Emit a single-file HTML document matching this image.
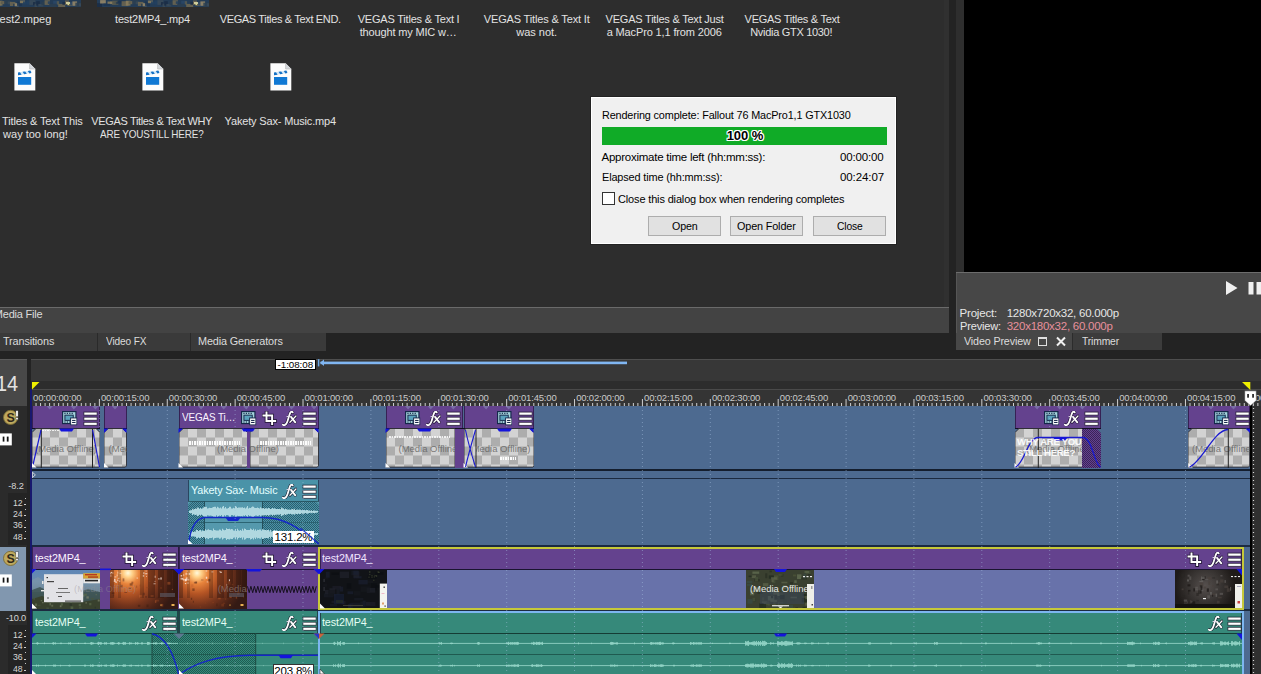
<!DOCTYPE html><html><head><meta charset="utf-8"><title>VEGAS</title><style>
html,body{margin:0;padding:0;background:#232323;}
body{width:1261px;height:674px;overflow:hidden;position:relative;font-family:"Liberation Sans",sans-serif;}
.abs{position:absolute;}
.ml{font-size:11.5px;color:#e2e2e2;white-space:nowrap;line-height:14px;letter-spacing:-0.25px;}
.tl{font-size:11.5px;color:#dcdcdc;white-space:nowrap;line-height:15px;letter-spacing:-0.2px;}
.pl{font-size:11.5px;color:#e6e6e6;white-space:nowrap;line-height:14px;letter-spacing:-0.1px;}
.dl{font-size:11.5px;color:#000;white-space:nowrap;line-height:14px;letter-spacing:-0.22px;}
.btn{width:73px;height:20px;box-sizing:border-box;background:#e1e1e1;border:1px solid #adadad;text-align:center;line-height:18px;}
.strip{background:linear-gradient(90deg,#2a3648,#4a4a3c 20%,#26344a 45%,#50483a 70%,#2a3850);}
.ct{font-size:12px;white-space:nowrap;line-height:15px;letter-spacing:-0.1px;}
.chk{background-color:#d8d8d8;background-image:repeating-conic-gradient(#b3b3b3 0% 25%,#d8d8d8 0% 50%);background-size:17.8px 17.8px;}
.off{font-size:12.5px;text-align:center;white-space:nowrap;line-height:16px;letter-spacing:0.2px;}
.rl{font-size:10px;color:#c4c4c4;white-space:nowrap;line-height:12px;letter-spacing:-0.3px;text-shadow:1px 1px 0 #1a1a1a;}
.ll{font-size:10.5px;color:#d8d8d8;white-space:nowrap;line-height:12px;text-align:right;letter-spacing:-0.2px;}
.wt{height:4px;background:repeating-linear-gradient(90deg,#fff 0 2px,rgba(255,255,255,0.25) 2px 3px,#fff 3px 4px,rgba(255,255,255,0) 4px 5px);opacity:0.95}</style></head><body>
<svg width="0" height="0" style="position:absolute"><defs>
<symbol id="ham" viewBox="0 0 15 15"><g fill="#fff" stroke="#0c0618" stroke-opacity="0.78" stroke-width="0.8"><rect x="0.9" y="1.1" width="13.2" height="3"/><rect x="0.9" y="6.2" width="13.2" height="3"/><rect x="0.9" y="11.3" width="13.2" height="3"/></g></symbol>
<symbol id="fx" viewBox="0 0 15 15"><g fill="none" stroke="#0c0618" stroke-opacity="0.78" stroke-linecap="round" stroke-linejoin="round"><path d="M10.7 1.4C10.2 0.5 8.9 0.5 8.3 1.7C7.4 3.5 6.6 7 5.6 10C4.9 12.2 4 13.8 2.6 14.1C1.8 14.3 1.1 14 0.9 13.6" stroke-width="3"/><path d="M9 5.9L13.3 11.3M14 5L7.9 11.3" stroke-width="2.8"/></g><g fill="none" stroke="#fff" stroke-linecap="round" stroke-linejoin="round"><path d="M10.7 1.4C10.2 0.5 8.9 0.5 8.3 1.7C7.4 3.5 6.6 7 5.6 10C4.9 12.2 4 13.8 2.6 14.1C1.8 14.3 1.1 14 0.9 13.6" stroke-width="1.8"/><path d="M5 5.5H8.2" stroke-width="0.9" stroke="#e8e0f0"/><path d="M9 5.9L13.3 11.3" stroke-width="1.85"/><path d="M14 5L7.9 11.3" stroke-width="1.25"/></g></symbol>
<symbol id="crop" viewBox="0 0 16 16"><g fill="none" stroke="#0c0618" stroke-opacity="0.78" stroke-width="3.8" stroke-linecap="square"><path d="M4.8 1.6 V10.6 H14"/><path d="M1.6 4.8 H10.8 V14"/></g><g fill="none" stroke="#fff" stroke-width="2.1" stroke-linecap="square"><path d="M4.8 1.6 V10.6 H14"/><path d="M1.6 4.8 H10.8 V14"/></g></symbol>
<symbol id="gen" viewBox="0 0 16 15"><rect x="0.6" y="0.6" width="13.8" height="12.4" fill="#a4d4dc" stroke="#16284a" stroke-width="1.2"/><rect x="3" y="4.3" width="8.6" height="5.4" fill="#5aa2bc" stroke="#16284a" stroke-width="1"/><g fill="#16284a"><rect x="2.4" y="1.8" width="1.3" height="1.2"/><rect x="4.9" y="1.8" width="1.3" height="1.2"/><rect x="7.4" y="1.8" width="1.3" height="1.2"/><rect x="9.9" y="1.8" width="1.3" height="1.2"/><rect x="2.4" y="10.8" width="1.3" height="1.2"/><rect x="4.9" y="10.8" width="1.3" height="1.2"/><rect x="7.4" y="10.8" width="1.3" height="1.2"/></g><rect x="8.9" y="7.2" width="6.5" height="7.2" fill="#fff" stroke="#16284a" stroke-width="1"/><rect x="10.4" y="9.2" width="3.6" height="1.1" fill="#16284a"/><rect x="10.4" y="11.3" width="3.6" height="1.1" fill="#16284a"/></symbol>
<pattern id="dith" width="2" height="2" patternUnits="userSpaceOnUse"><rect width="2" height="2" fill="#2c5f6e"/><rect width="1" height="1" fill="#4a93a8"/><rect x="1" y="1" width="1" height="1" fill="#4a93a8"/></pattern>
<pattern id="dithg" width="2" height="2" patternUnits="userSpaceOnUse"><rect width="2" height="2" fill="#1f5c52"/><rect width="1" height="1" fill="#36897a"/><rect x="1" y="1" width="1" height="1" fill="#36897a"/></pattern>
<pattern id="dithp" width="2" height="2" patternUnits="userSpaceOnUse"><rect width="2" height="2" fill="#3a2458"/><rect width="1" height="1" fill="#64428e"/><rect x="1" y="1" width="1" height="1" fill="#64428e"/></pattern>
</defs></svg>
<div class="abs" style="left:0;top:0;width:949px;height:307px;background:#2d2d2d"></div>
<svg class="abs" style="left:0px;top:0" width="81" height="7.2"><rect width="81" height="7.2" fill="#243c56"/><rect x="-31.0" y="3.2" width="5.1" height="4.8" fill="#1a2c44" opacity="0.85"/><rect x="-27.9" y="0.1" width="5.7" height="3.4" fill="#9a8a68" opacity="0.85"/><rect x="-24.5" y="3.6" width="6.7" height="2.3" fill="#1c3450" opacity="0.85"/><rect x="-20.5" y="1.5" width="4.3" height="2.3" fill="#8a7c5c" opacity="0.85"/><rect x="-17.9" y="1.6" width="3.2" height="2.5" fill="#8a7c5c" opacity="0.85"/><rect x="-15.9" y="0.6" width="6.3" height="4.4" fill="#5a5a4c" opacity="0.85"/><rect x="-12.1" y="1.8" width="2.7" height="2.4" fill="#2c3e50" opacity="0.85"/><rect x="-10.5" y="0.8" width="6.9" height="2.6" fill="#1c3450" opacity="0.85"/><rect x="-6.4" y="1.2" width="6.9" height="4.9" fill="#6e6650" opacity="0.85"/><rect x="-2.2" y="0.7" width="4.7" height="4.9" fill="#8a7c5c" opacity="0.85"/><rect x="0.6" y="1.2" width="3.0" height="3.1" fill="#5a5a4c" opacity="0.85"/><rect x="2.4" y="1.1" width="2.8" height="3.0" fill="#6e6650" opacity="0.85"/><rect x="4.1" y="0.0" width="6.1" height="4.0" fill="#2c3e50" opacity="0.85"/><rect x="7.7" y="1.4" width="3.7" height="2.9" fill="#3a4a58" opacity="0.85"/><rect x="9.9" y="1.9" width="5.5" height="4.1" fill="#6e6650" opacity="0.85"/><rect x="13.2" y="3.8" width="2.3" height="3.1" fill="#1c3450" opacity="0.85"/><rect x="14.6" y="3.2" width="4.0" height="3.1" fill="#9a8a68" opacity="0.85"/><rect x="17.0" y="1.8" width="4.9" height="4.1" fill="#1c3450" opacity="0.85"/><rect x="19.9" y="0.5" width="5.1" height="2.7" fill="#8a7c5c" opacity="0.85"/><rect x="23.0" y="1.4" width="6.1" height="3.1" fill="#22405e" opacity="0.85"/><rect x="26.7" y="0.4" width="4.6" height="4.2" fill="#22405e" opacity="0.85"/><rect x="29.4" y="0.1" width="6.0" height="4.8" fill="#3a4a58" opacity="0.85"/><rect x="33.0" y="2.1" width="2.5" height="3.1" fill="#1a2c44" opacity="0.85"/><rect x="34.5" y="3.7" width="2.7" height="3.6" fill="#3a4a58" opacity="0.85"/><rect x="36.2" y="1.2" width="3.6" height="4.4" fill="#1a2c44" opacity="0.85"/><rect x="38.3" y="4.0" width="5.1" height="2.5" fill="#3a4a58" opacity="0.85"/><rect x="41.4" y="2.1" width="2.2" height="3.2" fill="#2c3e50" opacity="0.85"/><rect x="42.7" y="1.4" width="3.2" height="2.8" fill="#2c3e50" opacity="0.85"/><rect x="44.6" y="0.2" width="5.3" height="4.7" fill="#6e6650" opacity="0.85"/><rect x="47.8" y="1.3" width="2.2" height="2.6" fill="#22405e" opacity="0.85"/><rect x="49.1" y="3.8" width="6.9" height="3.9" fill="#2c3e50" opacity="0.85"/><rect x="53.2" y="0.7" width="5.9" height="3.1" fill="#2a4666" opacity="0.85"/><rect x="56.8" y="1.2" width="2.3" height="3.4" fill="#5a5a4c" opacity="0.85"/><rect x="58.2" y="3.9" width="7.0" height="3.4" fill="#6e6650" opacity="0.85"/><rect x="62.4" y="1.9" width="4.4" height="2.9" fill="#1a2c44" opacity="0.85"/><rect x="65.0" y="0.5" width="4.0" height="4.5" fill="#6e6650" opacity="0.85"/><rect x="67.4" y="2.5" width="4.7" height="3.5" fill="#6e6650" opacity="0.85"/><rect x="70.2" y="2.0" width="3.7" height="3.5" fill="#2a4666" opacity="0.85"/><rect x="72.4" y="1.4" width="4.7" height="4.4" fill="#9a8a68" opacity="0.85"/><rect x="75.3" y="2.7" width="5.9" height="4.3" fill="#2c3e50" opacity="0.85"/><rect x="78.8" y="3.3" width="3.8" height="2.8" fill="#3a4a58" opacity="0.85"/><rect x="66" y="2.2" width="4" height="1.6" fill="#e8e4b0"/><rect x="67.5" y="3.5" width="1.5" height="1.5" fill="#d0d890"/></svg>
<svg class="abs" style="left:97px;top:0" width="112" height="7.2"><rect width="112" height="7.2" fill="#243c56"/><rect x="0.0" y="3.2" width="5.1" height="4.8" fill="#1a2c44" opacity="0.85"/><rect x="3.1" y="0.1" width="5.7" height="3.4" fill="#9a8a68" opacity="0.85"/><rect x="6.5" y="3.6" width="6.7" height="2.3" fill="#1c3450" opacity="0.85"/><rect x="10.5" y="1.5" width="4.3" height="2.3" fill="#8a7c5c" opacity="0.85"/><rect x="13.1" y="1.6" width="3.2" height="2.5" fill="#8a7c5c" opacity="0.85"/><rect x="15.1" y="0.6" width="6.3" height="4.4" fill="#5a5a4c" opacity="0.85"/><rect x="18.9" y="1.8" width="2.7" height="2.4" fill="#2c3e50" opacity="0.85"/><rect x="20.5" y="0.8" width="6.9" height="2.6" fill="#1c3450" opacity="0.85"/><rect x="24.6" y="1.2" width="6.9" height="4.9" fill="#6e6650" opacity="0.85"/><rect x="28.8" y="0.7" width="4.7" height="4.9" fill="#8a7c5c" opacity="0.85"/><rect x="31.6" y="1.2" width="3.0" height="3.1" fill="#5a5a4c" opacity="0.85"/><rect x="33.4" y="1.1" width="2.8" height="3.0" fill="#6e6650" opacity="0.85"/><rect x="35.1" y="0.0" width="6.1" height="4.0" fill="#2c3e50" opacity="0.85"/><rect x="38.7" y="1.4" width="3.7" height="2.9" fill="#3a4a58" opacity="0.85"/><rect x="40.9" y="1.9" width="5.5" height="4.1" fill="#6e6650" opacity="0.85"/><rect x="44.2" y="3.8" width="2.3" height="3.1" fill="#1c3450" opacity="0.85"/><rect x="45.6" y="3.2" width="4.0" height="3.1" fill="#9a8a68" opacity="0.85"/><rect x="48.0" y="1.8" width="4.9" height="4.1" fill="#1c3450" opacity="0.85"/><rect x="50.9" y="0.5" width="5.1" height="2.7" fill="#8a7c5c" opacity="0.85"/><rect x="54.0" y="1.4" width="6.1" height="3.1" fill="#22405e" opacity="0.85"/><rect x="57.7" y="0.4" width="4.6" height="4.2" fill="#22405e" opacity="0.85"/><rect x="60.4" y="0.1" width="6.0" height="4.8" fill="#3a4a58" opacity="0.85"/><rect x="64.0" y="2.1" width="2.5" height="3.1" fill="#1a2c44" opacity="0.85"/><rect x="65.5" y="3.7" width="2.7" height="3.6" fill="#3a4a58" opacity="0.85"/><rect x="67.2" y="1.2" width="3.6" height="4.4" fill="#1a2c44" opacity="0.85"/><rect x="69.3" y="4.0" width="5.1" height="2.5" fill="#3a4a58" opacity="0.85"/><rect x="72.4" y="2.1" width="2.2" height="3.2" fill="#2c3e50" opacity="0.85"/><rect x="73.7" y="1.4" width="3.2" height="2.8" fill="#2c3e50" opacity="0.85"/><rect x="75.6" y="0.2" width="5.3" height="4.7" fill="#6e6650" opacity="0.85"/><rect x="78.8" y="1.3" width="2.2" height="2.6" fill="#22405e" opacity="0.85"/><rect x="80.1" y="3.8" width="6.9" height="3.9" fill="#2c3e50" opacity="0.85"/><rect x="84.2" y="0.7" width="5.9" height="3.1" fill="#2a4666" opacity="0.85"/><rect x="87.8" y="1.2" width="2.3" height="3.4" fill="#5a5a4c" opacity="0.85"/><rect x="89.2" y="3.9" width="7.0" height="3.4" fill="#6e6650" opacity="0.85"/><rect x="93.4" y="1.9" width="4.4" height="2.9" fill="#1a2c44" opacity="0.85"/><rect x="96.0" y="0.5" width="4.0" height="4.5" fill="#6e6650" opacity="0.85"/><rect x="98.4" y="2.5" width="4.7" height="3.5" fill="#6e6650" opacity="0.85"/><rect x="101.2" y="2.0" width="3.7" height="3.5" fill="#2a4666" opacity="0.85"/><rect x="103.4" y="1.4" width="4.7" height="4.4" fill="#9a8a68" opacity="0.85"/><rect x="106.3" y="2.7" width="5.9" height="4.3" fill="#2c3e50" opacity="0.85"/><rect x="109.8" y="3.3" width="3.8" height="2.8" fill="#3a4a58" opacity="0.85"/><rect x="97" y="2.2" width="4" height="1.6" fill="#e8e4b0"/><rect x="98.5" y="3.5" width="1.5" height="1.5" fill="#d0d890"/></svg>
<div class="abs" style="left:-3.60px;top:12px;font-size:11px;line-height:14px;letter-spacing:0.058px;color:#e2e2e2;white-space:pre;">test2.mpeg</div>
<div class="abs" style="left:115.00px;top:12px;font-size:11px;line-height:14px;letter-spacing:-0.157px;color:#e2e2e2;white-space:pre;">test2MP4_.mp4</div>
<div class="abs" style="left:219.70px;top:12px;font-size:11px;line-height:14px;letter-spacing:-0.350px;color:#e2e2e2;white-space:pre;">VEGAS Titles &amp; Text END.</div>
<div class="abs" style="left:357.75px;top:12px;font-size:11px;line-height:14px;letter-spacing:-0.213px;color:#e2e2e2;white-space:pre;">VEGAS Titles &amp; Text I</div>
<div class="abs" style="left:359.70px;top:25px;font-size:11px;line-height:14px;letter-spacing:-0.155px;color:#e2e2e2;white-space:pre;">thought my MIC w&hellip;</div>
<div class="abs" style="left:483.80px;top:12px;font-size:11px;line-height:14px;letter-spacing:-0.156px;color:#e2e2e2;white-space:pre;">VEGAS Titles &amp; Text It</div>
<div class="abs" style="left:516.20px;top:25px;font-size:11px;line-height:14px;letter-spacing:0.004px;color:#e2e2e2;white-space:pre;">was not.</div>
<div class="abs" style="left:605.60px;top:12px;font-size:11px;line-height:14px;letter-spacing:-0.220px;color:#e2e2e2;white-space:pre;">VEGAS Titles &amp; Text Just</div>
<div class="abs" style="left:606.70px;top:25px;font-size:11px;line-height:14px;letter-spacing:-0.137px;color:#e2e2e2;white-space:pre;">a MacPro 1,1 from 2006</div>
<div class="abs" style="left:744.60px;top:12px;font-size:11px;line-height:14px;letter-spacing:-0.266px;color:#e2e2e2;white-space:pre;">VEGAS Titles &amp; Text</div>
<div class="abs" style="left:750.20px;top:25px;font-size:11px;line-height:14px;letter-spacing:-0.301px;color:#e2e2e2;white-space:pre;">Nvidia GTX 1030!</div>
<div class="abs" style="left:2.00px;top:114px;font-size:11px;line-height:14px;letter-spacing:-0.130px;color:#e2e2e2;white-space:pre;">Titles &amp; Text This</div>
<div class="abs" style="left:3.10px;top:127px;font-size:11px;line-height:14px;letter-spacing:-0.009px;color:#e2e2e2;white-space:pre;">way too long!</div>
<div class="abs" style="left:91.35px;top:114px;font-size:11px;line-height:14px;letter-spacing:-0.351px;color:#e2e2e2;white-space:pre;">VEGAS Titles &amp; Text WHY</div>
<div class="abs" style="left:100.10px;top:127px;font-size:11px;line-height:14px;letter-spacing:-0.150px;color:#e2e2e2;white-space:pre;transform:scaleX(0.8986);transform-origin:0 0;">ARE YOUSTILL HERE?</div>
<div class="abs" style="left:224.55px;top:114px;font-size:11px;line-height:14px;letter-spacing:-0.154px;color:#e2e2e2;white-space:pre;">Yakety Sax- Music.mp4</div>
<svg class="abs" style="left:14px;top:63px" width="22" height="28" viewBox="0 0 22 28"><path d="M0.4 0.3 H15.6 L21.3 6 V27.6 H0.4 Z" fill="#fcfcfc"/><path d="M15.6 0.3 V6 H21.3 Z" fill="#d4d8dc"/><path d="M15.6 0.3 V6 H21.3" fill="none" stroke="#bcbcbc" stroke-width="0.7"/><rect x="4" y="14" width="13.2" height="7.8" fill="#0f78d4"/><path d="M4 12.3 V9.6 L17.2 7.4 V10.1 Z" fill="#cfe6f8"/><path d="M4 12.3 V9.6 L6 9.27 L7.6 11.7 Z M8.6 8.83 L11.2 8.4 L12.8 10.83 L10.2 11.27 Z M13.8 7.97 L16.2 7.57 L17.2 9 V10.1 L15.4 10.4 Z" fill="#1470c4"/></svg>
<svg class="abs" style="left:142px;top:63px" width="22" height="28" viewBox="0 0 22 28"><path d="M0.4 0.3 H15.6 L21.3 6 V27.6 H0.4 Z" fill="#fcfcfc"/><path d="M15.6 0.3 V6 H21.3 Z" fill="#d4d8dc"/><path d="M15.6 0.3 V6 H21.3" fill="none" stroke="#bcbcbc" stroke-width="0.7"/><rect x="4" y="14" width="13.2" height="7.8" fill="#0f78d4"/><path d="M4 12.3 V9.6 L17.2 7.4 V10.1 Z" fill="#cfe6f8"/><path d="M4 12.3 V9.6 L6 9.27 L7.6 11.7 Z M8.6 8.83 L11.2 8.4 L12.8 10.83 L10.2 11.27 Z M13.8 7.97 L16.2 7.57 L17.2 9 V10.1 L15.4 10.4 Z" fill="#1470c4"/></svg>
<svg class="abs" style="left:270px;top:63px" width="22" height="28" viewBox="0 0 22 28"><path d="M0.4 0.3 H15.6 L21.3 6 V27.6 H0.4 Z" fill="#fcfcfc"/><path d="M15.6 0.3 V6 H21.3 Z" fill="#d4d8dc"/><path d="M15.6 0.3 V6 H21.3" fill="none" stroke="#bcbcbc" stroke-width="0.7"/><rect x="4" y="14" width="13.2" height="7.8" fill="#0f78d4"/><path d="M4 12.3 V9.6 L17.2 7.4 V10.1 Z" fill="#cfe6f8"/><path d="M4 12.3 V9.6 L6 9.27 L7.6 11.7 Z M8.6 8.83 L11.2 8.4 L12.8 10.83 L10.2 11.27 Z M13.8 7.97 L16.2 7.57 L17.2 9 V10.1 L15.4 10.4 Z" fill="#1470c4"/></svg>
<div class="abs" style="left:0;top:307px;width:949px;height:26px;background:#434343;border-top:1px solid #6a6a6a;box-sizing:border-box"></div>
<div class="abs" style="left:-6.20px;top:307px;font-size:11px;line-height:14px;letter-spacing:-0.224px;color:#dcdcdc;white-space:pre;">Media File</div>
<div class="abs" style="left:949px;top:0;width:7px;height:333px;background:#232323"></div>
<div class="abs" style="left:0;top:333px;width:1261px;height:25px;background:#232323"></div>
<div class="abs" style="left:0;top:333px;width:326px;height:18px;background:#3a3a3a"></div>
<div class="abs" style="left:97px;top:333px;width:1px;height:18px;background:#2a2a2a"></div>
<div class="abs" style="left:190px;top:333px;width:1px;height:18px;background:#2a2a2a"></div>
<div class="abs" style="left:3.20px;top:334px;font-size:11.5px;line-height:14px;letter-spacing:-0.150px;color:#dcdcdc;white-space:pre;transform:scaleX(0.9452);transform-origin:0 0;">Transitions</div>
<div class="abs" style="left:105.70px;top:334px;font-size:11.5px;line-height:14px;letter-spacing:-0.150px;color:#dcdcdc;white-space:pre;transform:scaleX(0.8802);transform-origin:0 0;">Video FX</div>
<div class="abs" style="left:197.60px;top:334px;font-size:11.5px;line-height:14px;letter-spacing:-0.150px;color:#dcdcdc;white-space:pre;transform:scaleX(0.9448);transform-origin:0 0;">Media Generators</div>
<div class="abs" style="left:956px;top:0;width:305px;height:272px;background:#2e2e2e"></div>
<div class="abs" style="left:956px;top:272px;width:305px;height:61px;background:#474747;border-left:1px solid #565656;box-sizing:border-box"></div>
<div class="abs" style="left:944px;top:0;width:5px;height:307px;background:#303030"></div>
<div class="abs" style="left:964px;top:0;width:297px;height:272px;background:#000"></div>
<div class="abs" style="left:956px;top:272px;width:305px;height:1px;background:#6c6c6c"></div>
<svg class="abs" style="left:1225px;top:280px" width="36" height="16" viewBox="0 0 36 16"><path d="M1 1 L12.5 8 L1 15 Z" fill="#f0f0f0"/><rect x="23.5" y="2" width="5" height="12.5" fill="#f0f0f0"/><rect x="31.5" y="2" width="5" height="12.5" fill="#f0f0f0"/></svg>
<div class="abs" style="left:959.60px;top:306px;font-size:11.5px;line-height:14px;letter-spacing:-0.211px;color:#e6e6e6;white-space:pre;">Project:</div>
<div class="abs" style="left:1006.70px;top:306px;font-size:11.5px;line-height:14px;letter-spacing:-0.241px;color:#e6e6e6;white-space:pre;">1280x720x32, 60.000p</div>
<div class="abs" style="left:959.60px;top:319px;font-size:11.5px;line-height:14px;letter-spacing:-0.150px;color:#e6e6e6;white-space:pre;transform:scaleX(0.9558);transform-origin:0 0;">Preview:</div>
<div class="abs" style="left:1006.70px;top:319px;font-size:11.5px;line-height:14px;letter-spacing:-0.244px;color:#e8909c;white-space:pre;">320x180x32, 60.000p</div>
<div class="abs" style="left:1073px;top:333px;width:89px;height:17px;background:#3c3c3c"></div>
<div class="abs" style="left:956px;top:333px;width:117px;height:17px;background:#474747"></div>
<div class="abs" style="left:1072px;top:333px;width:1px;height:17px;background:#2c2c2c"></div>
<div class="abs" style="left:963.60px;top:334px;font-size:11.5px;line-height:14px;letter-spacing:-0.150px;color:#dcdcdc;white-space:pre;transform:scaleX(0.9334);transform-origin:0 0;">Video Preview</div>
<div class="abs" style="left:1082.00px;top:334px;font-size:11.5px;line-height:14px;letter-spacing:-0.150px;color:#dcdcdc;white-space:pre;transform:scaleX(0.8955);transform-origin:0 0;">Trimmer</div>
<svg class="abs" style="left:1037px;top:336px" width="30" height="12" viewBox="0 0 30 12"><rect x="1.5" y="1.5" width="8" height="8" fill="none" stroke="#e0e0e0" stroke-width="1"/><rect x="1" y="1" width="9" height="2" fill="#e0e0e0"/><path d="M20 1.5 L28 9.5 M28 1.5 L20 9.5" stroke="#f0f0f0" stroke-width="2"/></svg>
<div class="abs" style="left:590px;top:96px;width:307px;height:149px;background:#222"></div>
<div class="abs" style="left:591px;top:97px;width:305px;height:147px;background:#f0f0f0;border:1px solid #fff;box-sizing:border-box"></div>
<div class="abs" style="left:601.50px;top:108px;font-size:11.5px;line-height:14px;letter-spacing:-0.150px;color:#000;white-space:pre;transform:scaleX(0.9422);transform-origin:0 0;">Rendering complete: Fallout 76 MacPro1,1 GTX1030</div>
<div class="abs" style="left:602px;top:127px;width:285px;height:18px;background:#10ab27"></div>
<div class="abs" style="left:726.70px;top:128px;font-size:13px;line-height:16px;letter-spacing:-0.052px;color:#000;white-space:pre;font-weight:bold;text-shadow:-1px 0 #fff,1px 0 #fff,0 -1px #fff,0 1px #fff,1px 1px #fff,-1px -1px #fff,1px -1px #fff,-1px 1px #fff;">100 %</div>
<div class="abs" style="left:601.50px;top:150px;font-size:11.5px;line-height:14px;letter-spacing:-0.252px;color:#000;white-space:pre;">Approximate time left (hh:mm:ss):</div>
<div class="abs" style="left:839.90px;top:150px;font-size:11.5px;line-height:14px;letter-spacing:-0.133px;color:#000;white-space:pre;">00:00:00</div>
<div class="abs" style="left:601.50px;top:170px;font-size:11.5px;line-height:14px;letter-spacing:-0.150px;color:#000;white-space:pre;transform:scaleX(0.9497);transform-origin:0 0;">Elapsed time (hh:mm:ss):</div>
<div class="abs" style="left:839.90px;top:170px;font-size:11.5px;line-height:14px;letter-spacing:-0.071px;color:#000;white-space:pre;">00:24:07</div>
<div class="abs" style="left:602px;top:192px;width:13px;height:13px;background:#fff;border:1px solid #333;box-sizing:border-box"></div>
<div class="abs" style="left:618.00px;top:192px;font-size:11.5px;line-height:14px;letter-spacing:-0.150px;color:#000;white-space:pre;transform:scaleX(0.9541);transform-origin:0 0;">Close this dialog box when rendering completes</div>
<div class="abs" style="left:648px;top:215.5px;width:73px;height:20px;box-sizing:border-box;background:#e1e1e1;border:1px solid #adadad"></div>
<div class="abs" style="left:671.50px;top:218.5px;font-size:11.5px;line-height:14px;letter-spacing:-0.150px;color:#000;white-space:pre;transform:scaleX(0.9298);transform-origin:0 0;">Open</div>
<div class="abs" style="left:730px;top:215.5px;width:73px;height:20px;box-sizing:border-box;background:#e1e1e1;border:1px solid #adadad"></div>
<div class="abs" style="left:737.00px;top:218.5px;font-size:11.5px;line-height:14px;letter-spacing:-0.150px;color:#000;white-space:pre;transform:scaleX(0.9410);transform-origin:0 0;">Open Folder</div>
<div class="abs" style="left:813px;top:215.5px;width:73px;height:20px;box-sizing:border-box;background:#e1e1e1;border:1px solid #adadad"></div>
<div class="abs" style="left:836.50px;top:218.5px;font-size:11.5px;line-height:14px;letter-spacing:-0.150px;color:#000;white-space:pre;transform:scaleX(0.8935);transform-origin:0 0;">Close</div>
<div class="abs" style="left:0;top:358.6px;width:27px;height:47.4px;background:#484848;border-top:1px solid #5a5a5a;box-sizing:border-box"></div>
<div class="abs" style="left:-4.00px;top:371.8px;font-size:22px;line-height:24px;letter-spacing:-0.150px;color:#e2e2e2;white-space:pre;transform:scaleX(0.9019);transform-origin:0 0;">14</div>
<div class="abs" style="left:27px;top:358px;width:4px;height:316px;background:#232323"></div>
<div class="abs" style="left:31px;top:358.6px;width:1230px;height:22.4px;background:#373737;border-top:1px solid #4e4e4e;box-sizing:border-box"></div>
<div class="abs" style="left:31px;top:381px;width:1230px;height:8px;background:#2d2d2d"></div>
<div class="abs" style="left:31px;top:389px;width:1230px;height:17px;background:#343434;border-top:1px solid #4a4a4a;box-sizing:border-box"></div>
<div class="abs" style="left:275px;top:358.7px;width:40.5px;height:11px;background:#fff;border:1px solid #000;box-sizing:border-box"></div>
<div class="abs" style="left:277.55px;top:358.6px;font-size:9.8px;line-height:11px;letter-spacing:-0.058px;color:#000;white-space:pre;">-1:08:08</div>
<svg class="abs" style="left:317px;top:358px" width="312" height="10"><path d="M1.6 1.2V8.4" stroke="#6aa8e8" stroke-width="1.5" fill="none"/><path d="M3 4.8L7 1.6V8Z" fill="#78b2f0"/><rect x="3.5" y="3.6" width="306.5" height="2.6" fill="#80b6f2"/></svg>
<svg class="abs" style="left:31px;top:381px" width="10" height="9"><path d="M1 1H8.5L1 8.5Z" fill="#f0f000"/></svg>
<svg class="abs" style="left:1241px;top:381px" width="10" height="10"><path d="M1 1H9.3V9Z" fill="#f0f000"/></svg>
<svg class="abs" style="left:0;top:389px" width="1261" height="17"><rect x="31.00" y="10" width="1" height="7" fill="#d0d0d0"/><rect x="35.53" y="14" width="1" height="3" fill="#d0d0d0"/><rect x="40.05" y="14" width="1" height="3" fill="#d0d0d0"/><rect x="44.58" y="14" width="1" height="3" fill="#d0d0d0"/><rect x="49.10" y="14" width="1" height="3" fill="#d0d0d0"/><rect x="53.63" y="14" width="1" height="3" fill="#d0d0d0"/><rect x="58.15" y="14" width="1" height="3" fill="#d0d0d0"/><rect x="62.68" y="14" width="1" height="3" fill="#d0d0d0"/><rect x="67.20" y="14" width="1" height="3" fill="#d0d0d0"/><rect x="71.73" y="14" width="1" height="3" fill="#d0d0d0"/><rect x="76.25" y="14" width="1" height="3" fill="#d0d0d0"/><rect x="80.78" y="14" width="1" height="3" fill="#d0d0d0"/><rect x="85.30" y="14" width="1" height="3" fill="#d0d0d0"/><rect x="89.83" y="14" width="1" height="3" fill="#d0d0d0"/><rect x="94.35" y="14" width="1" height="3" fill="#d0d0d0"/><rect x="98.88" y="10" width="1" height="7" fill="#d0d0d0"/><rect x="103.41" y="14" width="1" height="3" fill="#d0d0d0"/><rect x="107.93" y="14" width="1" height="3" fill="#d0d0d0"/><rect x="112.46" y="14" width="1" height="3" fill="#d0d0d0"/><rect x="116.98" y="14" width="1" height="3" fill="#d0d0d0"/><rect x="121.51" y="14" width="1" height="3" fill="#d0d0d0"/><rect x="126.03" y="14" width="1" height="3" fill="#d0d0d0"/><rect x="130.56" y="14" width="1" height="3" fill="#d0d0d0"/><rect x="135.08" y="14" width="1" height="3" fill="#d0d0d0"/><rect x="139.61" y="14" width="1" height="3" fill="#d0d0d0"/><rect x="144.13" y="14" width="1" height="3" fill="#d0d0d0"/><rect x="148.66" y="14" width="1" height="3" fill="#d0d0d0"/><rect x="153.18" y="14" width="1" height="3" fill="#d0d0d0"/><rect x="157.71" y="14" width="1" height="3" fill="#d0d0d0"/><rect x="162.23" y="14" width="1" height="3" fill="#d0d0d0"/><rect x="166.76" y="10" width="1" height="7" fill="#d0d0d0"/><rect x="171.29" y="14" width="1" height="3" fill="#d0d0d0"/><rect x="175.81" y="14" width="1" height="3" fill="#d0d0d0"/><rect x="180.34" y="14" width="1" height="3" fill="#d0d0d0"/><rect x="184.86" y="14" width="1" height="3" fill="#d0d0d0"/><rect x="189.39" y="14" width="1" height="3" fill="#d0d0d0"/><rect x="193.91" y="14" width="1" height="3" fill="#d0d0d0"/><rect x="198.44" y="14" width="1" height="3" fill="#d0d0d0"/><rect x="202.96" y="14" width="1" height="3" fill="#d0d0d0"/><rect x="207.49" y="14" width="1" height="3" fill="#d0d0d0"/><rect x="212.01" y="14" width="1" height="3" fill="#d0d0d0"/><rect x="216.54" y="14" width="1" height="3" fill="#d0d0d0"/><rect x="221.06" y="14" width="1" height="3" fill="#d0d0d0"/><rect x="225.59" y="14" width="1" height="3" fill="#d0d0d0"/><rect x="230.11" y="14" width="1" height="3" fill="#d0d0d0"/><rect x="234.64" y="10" width="1" height="7" fill="#d0d0d0"/><rect x="239.17" y="14" width="1" height="3" fill="#d0d0d0"/><rect x="243.69" y="14" width="1" height="3" fill="#d0d0d0"/><rect x="248.22" y="14" width="1" height="3" fill="#d0d0d0"/><rect x="252.74" y="14" width="1" height="3" fill="#d0d0d0"/><rect x="257.27" y="14" width="1" height="3" fill="#d0d0d0"/><rect x="261.79" y="14" width="1" height="3" fill="#d0d0d0"/><rect x="266.32" y="14" width="1" height="3" fill="#d0d0d0"/><rect x="270.84" y="14" width="1" height="3" fill="#d0d0d0"/><rect x="275.37" y="14" width="1" height="3" fill="#d0d0d0"/><rect x="279.89" y="14" width="1" height="3" fill="#d0d0d0"/><rect x="284.42" y="14" width="1" height="3" fill="#d0d0d0"/><rect x="288.94" y="14" width="1" height="3" fill="#d0d0d0"/><rect x="293.47" y="14" width="1" height="3" fill="#d0d0d0"/><rect x="297.99" y="14" width="1" height="3" fill="#d0d0d0"/><rect x="302.52" y="10" width="1" height="7" fill="#d0d0d0"/><rect x="307.05" y="14" width="1" height="3" fill="#d0d0d0"/><rect x="311.57" y="14" width="1" height="3" fill="#d0d0d0"/><rect x="316.10" y="14" width="1" height="3" fill="#d0d0d0"/><rect x="320.62" y="14" width="1" height="3" fill="#d0d0d0"/><rect x="325.15" y="14" width="1" height="3" fill="#d0d0d0"/><rect x="329.67" y="14" width="1" height="3" fill="#d0d0d0"/><rect x="334.20" y="14" width="1" height="3" fill="#d0d0d0"/><rect x="338.72" y="14" width="1" height="3" fill="#d0d0d0"/><rect x="343.25" y="14" width="1" height="3" fill="#d0d0d0"/><rect x="347.77" y="14" width="1" height="3" fill="#d0d0d0"/><rect x="352.30" y="14" width="1" height="3" fill="#d0d0d0"/><rect x="356.82" y="14" width="1" height="3" fill="#d0d0d0"/><rect x="361.35" y="14" width="1" height="3" fill="#d0d0d0"/><rect x="365.87" y="14" width="1" height="3" fill="#d0d0d0"/><rect x="370.40" y="10" width="1" height="7" fill="#d0d0d0"/><rect x="374.93" y="14" width="1" height="3" fill="#d0d0d0"/><rect x="379.45" y="14" width="1" height="3" fill="#d0d0d0"/><rect x="383.98" y="14" width="1" height="3" fill="#d0d0d0"/><rect x="388.50" y="14" width="1" height="3" fill="#d0d0d0"/><rect x="393.03" y="14" width="1" height="3" fill="#d0d0d0"/><rect x="397.55" y="14" width="1" height="3" fill="#d0d0d0"/><rect x="402.08" y="14" width="1" height="3" fill="#d0d0d0"/><rect x="406.60" y="14" width="1" height="3" fill="#d0d0d0"/><rect x="411.13" y="14" width="1" height="3" fill="#d0d0d0"/><rect x="415.65" y="14" width="1" height="3" fill="#d0d0d0"/><rect x="420.18" y="14" width="1" height="3" fill="#d0d0d0"/><rect x="424.70" y="14" width="1" height="3" fill="#d0d0d0"/><rect x="429.23" y="14" width="1" height="3" fill="#d0d0d0"/><rect x="433.75" y="14" width="1" height="3" fill="#d0d0d0"/><rect x="438.28" y="10" width="1" height="7" fill="#d0d0d0"/><rect x="442.81" y="14" width="1" height="3" fill="#d0d0d0"/><rect x="447.33" y="14" width="1" height="3" fill="#d0d0d0"/><rect x="451.86" y="14" width="1" height="3" fill="#d0d0d0"/><rect x="456.38" y="14" width="1" height="3" fill="#d0d0d0"/><rect x="460.91" y="14" width="1" height="3" fill="#d0d0d0"/><rect x="465.43" y="14" width="1" height="3" fill="#d0d0d0"/><rect x="469.96" y="14" width="1" height="3" fill="#d0d0d0"/><rect x="474.48" y="14" width="1" height="3" fill="#d0d0d0"/><rect x="479.01" y="14" width="1" height="3" fill="#d0d0d0"/><rect x="483.53" y="14" width="1" height="3" fill="#d0d0d0"/><rect x="488.06" y="14" width="1" height="3" fill="#d0d0d0"/><rect x="492.58" y="14" width="1" height="3" fill="#d0d0d0"/><rect x="497.11" y="14" width="1" height="3" fill="#d0d0d0"/><rect x="501.63" y="14" width="1" height="3" fill="#d0d0d0"/><rect x="506.16" y="10" width="1" height="7" fill="#d0d0d0"/><rect x="510.69" y="14" width="1" height="3" fill="#d0d0d0"/><rect x="515.21" y="14" width="1" height="3" fill="#d0d0d0"/><rect x="519.74" y="14" width="1" height="3" fill="#d0d0d0"/><rect x="524.26" y="14" width="1" height="3" fill="#d0d0d0"/><rect x="528.79" y="14" width="1" height="3" fill="#d0d0d0"/><rect x="533.31" y="14" width="1" height="3" fill="#d0d0d0"/><rect x="537.84" y="14" width="1" height="3" fill="#d0d0d0"/><rect x="542.36" y="14" width="1" height="3" fill="#d0d0d0"/><rect x="546.89" y="14" width="1" height="3" fill="#d0d0d0"/><rect x="551.41" y="14" width="1" height="3" fill="#d0d0d0"/><rect x="555.94" y="14" width="1" height="3" fill="#d0d0d0"/><rect x="560.46" y="14" width="1" height="3" fill="#d0d0d0"/><rect x="564.99" y="14" width="1" height="3" fill="#d0d0d0"/><rect x="569.51" y="14" width="1" height="3" fill="#d0d0d0"/><rect x="574.04" y="10" width="1" height="7" fill="#d0d0d0"/><rect x="578.57" y="14" width="1" height="3" fill="#d0d0d0"/><rect x="583.09" y="14" width="1" height="3" fill="#d0d0d0"/><rect x="587.62" y="14" width="1" height="3" fill="#d0d0d0"/><rect x="592.14" y="14" width="1" height="3" fill="#d0d0d0"/><rect x="596.67" y="14" width="1" height="3" fill="#d0d0d0"/><rect x="601.19" y="14" width="1" height="3" fill="#d0d0d0"/><rect x="605.72" y="14" width="1" height="3" fill="#d0d0d0"/><rect x="610.24" y="14" width="1" height="3" fill="#d0d0d0"/><rect x="614.77" y="14" width="1" height="3" fill="#d0d0d0"/><rect x="619.29" y="14" width="1" height="3" fill="#d0d0d0"/><rect x="623.82" y="14" width="1" height="3" fill="#d0d0d0"/><rect x="628.34" y="14" width="1" height="3" fill="#d0d0d0"/><rect x="632.87" y="14" width="1" height="3" fill="#d0d0d0"/><rect x="637.39" y="14" width="1" height="3" fill="#d0d0d0"/><rect x="641.92" y="10" width="1" height="7" fill="#d0d0d0"/><rect x="646.45" y="14" width="1" height="3" fill="#d0d0d0"/><rect x="650.97" y="14" width="1" height="3" fill="#d0d0d0"/><rect x="655.50" y="14" width="1" height="3" fill="#d0d0d0"/><rect x="660.02" y="14" width="1" height="3" fill="#d0d0d0"/><rect x="664.55" y="14" width="1" height="3" fill="#d0d0d0"/><rect x="669.07" y="14" width="1" height="3" fill="#d0d0d0"/><rect x="673.60" y="14" width="1" height="3" fill="#d0d0d0"/><rect x="678.12" y="14" width="1" height="3" fill="#d0d0d0"/><rect x="682.65" y="14" width="1" height="3" fill="#d0d0d0"/><rect x="687.17" y="14" width="1" height="3" fill="#d0d0d0"/><rect x="691.70" y="14" width="1" height="3" fill="#d0d0d0"/><rect x="696.22" y="14" width="1" height="3" fill="#d0d0d0"/><rect x="700.75" y="14" width="1" height="3" fill="#d0d0d0"/><rect x="705.27" y="14" width="1" height="3" fill="#d0d0d0"/><rect x="709.80" y="10" width="1" height="7" fill="#d0d0d0"/><rect x="714.33" y="14" width="1" height="3" fill="#d0d0d0"/><rect x="718.85" y="14" width="1" height="3" fill="#d0d0d0"/><rect x="723.38" y="14" width="1" height="3" fill="#d0d0d0"/><rect x="727.90" y="14" width="1" height="3" fill="#d0d0d0"/><rect x="732.43" y="14" width="1" height="3" fill="#d0d0d0"/><rect x="736.95" y="14" width="1" height="3" fill="#d0d0d0"/><rect x="741.48" y="14" width="1" height="3" fill="#d0d0d0"/><rect x="746.00" y="14" width="1" height="3" fill="#d0d0d0"/><rect x="750.53" y="14" width="1" height="3" fill="#d0d0d0"/><rect x="755.05" y="14" width="1" height="3" fill="#d0d0d0"/><rect x="759.58" y="14" width="1" height="3" fill="#d0d0d0"/><rect x="764.10" y="14" width="1" height="3" fill="#d0d0d0"/><rect x="768.63" y="14" width="1" height="3" fill="#d0d0d0"/><rect x="773.15" y="14" width="1" height="3" fill="#d0d0d0"/><rect x="777.68" y="10" width="1" height="7" fill="#d0d0d0"/><rect x="782.21" y="14" width="1" height="3" fill="#d0d0d0"/><rect x="786.73" y="14" width="1" height="3" fill="#d0d0d0"/><rect x="791.26" y="14" width="1" height="3" fill="#d0d0d0"/><rect x="795.78" y="14" width="1" height="3" fill="#d0d0d0"/><rect x="800.31" y="14" width="1" height="3" fill="#d0d0d0"/><rect x="804.83" y="14" width="1" height="3" fill="#d0d0d0"/><rect x="809.36" y="14" width="1" height="3" fill="#d0d0d0"/><rect x="813.88" y="14" width="1" height="3" fill="#d0d0d0"/><rect x="818.41" y="14" width="1" height="3" fill="#d0d0d0"/><rect x="822.93" y="14" width="1" height="3" fill="#d0d0d0"/><rect x="827.46" y="14" width="1" height="3" fill="#d0d0d0"/><rect x="831.98" y="14" width="1" height="3" fill="#d0d0d0"/><rect x="836.51" y="14" width="1" height="3" fill="#d0d0d0"/><rect x="841.03" y="14" width="1" height="3" fill="#d0d0d0"/><rect x="845.56" y="10" width="1" height="7" fill="#d0d0d0"/><rect x="850.09" y="14" width="1" height="3" fill="#d0d0d0"/><rect x="854.61" y="14" width="1" height="3" fill="#d0d0d0"/><rect x="859.14" y="14" width="1" height="3" fill="#d0d0d0"/><rect x="863.66" y="14" width="1" height="3" fill="#d0d0d0"/><rect x="868.19" y="14" width="1" height="3" fill="#d0d0d0"/><rect x="872.71" y="14" width="1" height="3" fill="#d0d0d0"/><rect x="877.24" y="14" width="1" height="3" fill="#d0d0d0"/><rect x="881.76" y="14" width="1" height="3" fill="#d0d0d0"/><rect x="886.29" y="14" width="1" height="3" fill="#d0d0d0"/><rect x="890.81" y="14" width="1" height="3" fill="#d0d0d0"/><rect x="895.34" y="14" width="1" height="3" fill="#d0d0d0"/><rect x="899.86" y="14" width="1" height="3" fill="#d0d0d0"/><rect x="904.39" y="14" width="1" height="3" fill="#d0d0d0"/><rect x="908.91" y="14" width="1" height="3" fill="#d0d0d0"/><rect x="913.44" y="10" width="1" height="7" fill="#d0d0d0"/><rect x="917.97" y="14" width="1" height="3" fill="#d0d0d0"/><rect x="922.49" y="14" width="1" height="3" fill="#d0d0d0"/><rect x="927.02" y="14" width="1" height="3" fill="#d0d0d0"/><rect x="931.54" y="14" width="1" height="3" fill="#d0d0d0"/><rect x="936.07" y="14" width="1" height="3" fill="#d0d0d0"/><rect x="940.59" y="14" width="1" height="3" fill="#d0d0d0"/><rect x="945.12" y="14" width="1" height="3" fill="#d0d0d0"/><rect x="949.64" y="14" width="1" height="3" fill="#d0d0d0"/><rect x="954.17" y="14" width="1" height="3" fill="#d0d0d0"/><rect x="958.69" y="14" width="1" height="3" fill="#d0d0d0"/><rect x="963.22" y="14" width="1" height="3" fill="#d0d0d0"/><rect x="967.74" y="14" width="1" height="3" fill="#d0d0d0"/><rect x="972.27" y="14" width="1" height="3" fill="#d0d0d0"/><rect x="976.79" y="14" width="1" height="3" fill="#d0d0d0"/><rect x="981.32" y="10" width="1" height="7" fill="#d0d0d0"/><rect x="985.85" y="14" width="1" height="3" fill="#d0d0d0"/><rect x="990.37" y="14" width="1" height="3" fill="#d0d0d0"/><rect x="994.90" y="14" width="1" height="3" fill="#d0d0d0"/><rect x="999.42" y="14" width="1" height="3" fill="#d0d0d0"/><rect x="1003.95" y="14" width="1" height="3" fill="#d0d0d0"/><rect x="1008.47" y="14" width="1" height="3" fill="#d0d0d0"/><rect x="1013.00" y="14" width="1" height="3" fill="#d0d0d0"/><rect x="1017.52" y="14" width="1" height="3" fill="#d0d0d0"/><rect x="1022.05" y="14" width="1" height="3" fill="#d0d0d0"/><rect x="1026.57" y="14" width="1" height="3" fill="#d0d0d0"/><rect x="1031.10" y="14" width="1" height="3" fill="#d0d0d0"/><rect x="1035.62" y="14" width="1" height="3" fill="#d0d0d0"/><rect x="1040.15" y="14" width="1" height="3" fill="#d0d0d0"/><rect x="1044.67" y="14" width="1" height="3" fill="#d0d0d0"/><rect x="1049.20" y="10" width="1" height="7" fill="#d0d0d0"/><rect x="1053.73" y="14" width="1" height="3" fill="#d0d0d0"/><rect x="1058.25" y="14" width="1" height="3" fill="#d0d0d0"/><rect x="1062.78" y="14" width="1" height="3" fill="#d0d0d0"/><rect x="1067.30" y="14" width="1" height="3" fill="#d0d0d0"/><rect x="1071.83" y="14" width="1" height="3" fill="#d0d0d0"/><rect x="1076.35" y="14" width="1" height="3" fill="#d0d0d0"/><rect x="1080.88" y="14" width="1" height="3" fill="#d0d0d0"/><rect x="1085.40" y="14" width="1" height="3" fill="#d0d0d0"/><rect x="1089.93" y="14" width="1" height="3" fill="#d0d0d0"/><rect x="1094.45" y="14" width="1" height="3" fill="#d0d0d0"/><rect x="1098.98" y="14" width="1" height="3" fill="#d0d0d0"/><rect x="1103.50" y="14" width="1" height="3" fill="#d0d0d0"/><rect x="1108.03" y="14" width="1" height="3" fill="#d0d0d0"/><rect x="1112.55" y="14" width="1" height="3" fill="#d0d0d0"/><rect x="1117.08" y="10" width="1" height="7" fill="#d0d0d0"/><rect x="1121.61" y="14" width="1" height="3" fill="#d0d0d0"/><rect x="1126.13" y="14" width="1" height="3" fill="#d0d0d0"/><rect x="1130.66" y="14" width="1" height="3" fill="#d0d0d0"/><rect x="1135.18" y="14" width="1" height="3" fill="#d0d0d0"/><rect x="1139.71" y="14" width="1" height="3" fill="#d0d0d0"/><rect x="1144.23" y="14" width="1" height="3" fill="#d0d0d0"/><rect x="1148.76" y="14" width="1" height="3" fill="#d0d0d0"/><rect x="1153.28" y="14" width="1" height="3" fill="#d0d0d0"/><rect x="1157.81" y="14" width="1" height="3" fill="#d0d0d0"/><rect x="1162.33" y="14" width="1" height="3" fill="#d0d0d0"/><rect x="1166.86" y="14" width="1" height="3" fill="#d0d0d0"/><rect x="1171.38" y="14" width="1" height="3" fill="#d0d0d0"/><rect x="1175.91" y="14" width="1" height="3" fill="#d0d0d0"/><rect x="1180.43" y="14" width="1" height="3" fill="#d0d0d0"/><rect x="1184.96" y="10" width="1" height="7" fill="#d0d0d0"/><rect x="1189.49" y="14" width="1" height="3" fill="#d0d0d0"/><rect x="1194.01" y="14" width="1" height="3" fill="#d0d0d0"/><rect x="1198.54" y="14" width="1" height="3" fill="#d0d0d0"/><rect x="1203.06" y="14" width="1" height="3" fill="#d0d0d0"/><rect x="1207.59" y="14" width="1" height="3" fill="#d0d0d0"/><rect x="1212.11" y="14" width="1" height="3" fill="#d0d0d0"/><rect x="1216.64" y="14" width="1" height="3" fill="#d0d0d0"/><rect x="1221.16" y="14" width="1" height="3" fill="#d0d0d0"/><rect x="1225.69" y="14" width="1" height="3" fill="#d0d0d0"/><rect x="1230.21" y="14" width="1" height="3" fill="#d0d0d0"/><rect x="1234.74" y="14" width="1" height="3" fill="#d0d0d0"/><rect x="1239.26" y="14" width="1" height="3" fill="#d0d0d0"/><rect x="1243.79" y="14" width="1" height="3" fill="#d0d0d0"/><rect x="1248.31" y="14" width="1" height="3" fill="#d0d0d0"/><rect x="1252.84" y="10" width="1" height="7" fill="#d0d0d0"/><rect x="1257.37" y="14" width="1" height="3" fill="#d0d0d0"/></svg>
<div class="abs" style="left:33.10px;top:391.6px;font-size:9.5px;line-height:12px;letter-spacing:-0.172px;color:#cacaca;white-space:pre;">00:00:00:00</div>
<div class="abs" style="left:100.98px;top:391.6px;font-size:9.5px;line-height:12px;letter-spacing:-0.172px;color:#cacaca;white-space:pre;">00:00:15:00</div>
<div class="abs" style="left:168.86px;top:391.6px;font-size:9.5px;line-height:12px;letter-spacing:-0.172px;color:#cacaca;white-space:pre;">00:00:30:00</div>
<div class="abs" style="left:236.74px;top:391.6px;font-size:9.5px;line-height:12px;letter-spacing:-0.172px;color:#cacaca;white-space:pre;">00:00:45:00</div>
<div class="abs" style="left:304.62px;top:391.6px;font-size:9.5px;line-height:12px;letter-spacing:-0.172px;color:#cacaca;white-space:pre;">00:01:00:00</div>
<div class="abs" style="left:372.50px;top:391.6px;font-size:9.5px;line-height:12px;letter-spacing:-0.172px;color:#cacaca;white-space:pre;">00:01:15:00</div>
<div class="abs" style="left:440.38px;top:391.6px;font-size:9.5px;line-height:12px;letter-spacing:-0.172px;color:#cacaca;white-space:pre;">00:01:30:00</div>
<div class="abs" style="left:508.26px;top:391.6px;font-size:9.5px;line-height:12px;letter-spacing:-0.172px;color:#cacaca;white-space:pre;">00:01:45:00</div>
<div class="abs" style="left:576.14px;top:391.6px;font-size:9.5px;line-height:12px;letter-spacing:-0.172px;color:#cacaca;white-space:pre;">00:02:00:00</div>
<div class="abs" style="left:644.02px;top:391.6px;font-size:9.5px;line-height:12px;letter-spacing:-0.172px;color:#cacaca;white-space:pre;">00:02:15:00</div>
<div class="abs" style="left:711.90px;top:391.6px;font-size:9.5px;line-height:12px;letter-spacing:-0.172px;color:#cacaca;white-space:pre;">00:02:30:00</div>
<div class="abs" style="left:779.78px;top:391.6px;font-size:9.5px;line-height:12px;letter-spacing:-0.172px;color:#cacaca;white-space:pre;">00:02:45:00</div>
<div class="abs" style="left:847.66px;top:391.6px;font-size:9.5px;line-height:12px;letter-spacing:-0.172px;color:#cacaca;white-space:pre;">00:03:00:00</div>
<div class="abs" style="left:915.54px;top:391.6px;font-size:9.5px;line-height:12px;letter-spacing:-0.172px;color:#cacaca;white-space:pre;">00:03:15:00</div>
<div class="abs" style="left:983.42px;top:391.6px;font-size:9.5px;line-height:12px;letter-spacing:-0.172px;color:#cacaca;white-space:pre;">00:03:30:00</div>
<div class="abs" style="left:1051.30px;top:391.6px;font-size:9.5px;line-height:12px;letter-spacing:-0.172px;color:#cacaca;white-space:pre;">00:03:45:00</div>
<div class="abs" style="left:1119.18px;top:391.6px;font-size:9.5px;line-height:12px;letter-spacing:-0.172px;color:#cacaca;white-space:pre;">00:04:00:00</div>
<div class="abs" style="left:1187.06px;top:391.6px;font-size:9.5px;line-height:12px;letter-spacing:-0.172px;color:#cacaca;white-space:pre;">00:04:15:00</div>
<div class="abs" style="left:1254.94px;top:391.6px;font-size:9.5px;line-height:12px;letter-spacing:-0.172px;color:#cacaca;white-space:pre;">00:04:30:00</div>
<div class="abs" style="left:0;top:406px;width:27px;height:268px;background:#2b2b2b"></div>
<div class="abs" style="left:0;top:547px;width:26px;height:64px;background:#8197af"></div>
<div class="abs" style="left:8px;top:493px;width:19px;height:52px;background:#242424"></div>
<div class="abs" style="left:8px;top:625px;width:19px;height:49px;background:#242424"></div>
<svg class="abs" style="left:2px;top:409px" width="18" height="18"><circle cx="8.6" cy="8.4" r="7.1" fill="#bea95e" stroke="#7c6c34" stroke-width="0.9"/><text x="4.4" y="12.9" font-family="Liberation Sans" font-weight="bold" font-size="12.5" fill="#30281a">S</text><rect x="13.9" y="1.6" width="2.2" height="6" fill="#fff" stroke="#2b2b2b" stroke-width="0.4"/><rect x="13.9" y="8.7" width="2.2" height="2" fill="#fff" stroke="#2b2b2b" stroke-width="0.4"/></svg>
<svg class="abs" style="left:0px;top:433px" width="13" height="13"><rect x="-1" y="0.4" width="12.8" height="12" fill="#fff"/><rect x="2.7" y="3.6" width="1.7" height="5" fill="#111"/><rect x="6.8" y="3.6" width="1.8" height="5" fill="#111"/></svg>
<svg class="abs" style="left:2px;top:550.4px" width="18" height="18"><circle cx="8.6" cy="8.4" r="7.1" fill="#bea95e" stroke="#7c6c34" stroke-width="0.9"/><text x="4.4" y="12.9" font-family="Liberation Sans" font-weight="bold" font-size="12.5" fill="#30281a">S</text><rect x="13.9" y="1.6" width="2.2" height="6" fill="#fff" stroke="#2b2b2b" stroke-width="0.4"/><rect x="13.9" y="8.7" width="2.2" height="2" fill="#fff" stroke="#2b2b2b" stroke-width="0.4"/></svg>
<svg class="abs" style="left:0px;top:574.4px" width="13" height="13"><rect x="-1" y="0.4" width="12.8" height="12" fill="#fff"/><rect x="2.7" y="3.6" width="1.7" height="5" fill="#111"/><rect x="6.8" y="3.6" width="1.8" height="5" fill="#111"/></svg>
<div class="abs" style="left:8.30px;top:481.2px;font-size:9.2px;line-height:11px;letter-spacing:-0.063px;color:#d6d6d6;white-space:pre;">-8.2</div>
<div class="abs" style="left:12.50px;top:498.3px;font-size:9.2px;line-height:11px;letter-spacing:-0.150px;color:#d6d6d6;white-space:pre;transform:scaleX(0.9463);transform-origin:0 0;">12</div>
<div class="abs" style="left:24px;top:504.3px;width:1.8px;height:1px;background:#d0d0d0"></div>
<div class="abs" style="left:25px;top:498.1px;width:1px;height:1px;background:#c8c8c8"></div>
<div class="abs" style="left:12.50px;top:509.38px;font-size:9.2px;line-height:11px;letter-spacing:-0.150px;color:#d6d6d6;white-space:pre;transform:scaleX(0.9463);transform-origin:0 0;">24</div>
<div class="abs" style="left:24px;top:515.4px;width:1.8px;height:1px;background:#d0d0d0"></div>
<div class="abs" style="left:25px;top:509.2px;width:1px;height:1px;background:#c8c8c8"></div>
<div class="abs" style="left:12.50px;top:520.46px;font-size:9.2px;line-height:11px;letter-spacing:-0.150px;color:#d6d6d6;white-space:pre;transform:scaleX(0.9463);transform-origin:0 0;">36</div>
<div class="abs" style="left:24px;top:526.5px;width:1.8px;height:1px;background:#d0d0d0"></div>
<div class="abs" style="left:25px;top:520.3px;width:1px;height:1px;background:#c8c8c8"></div>
<div class="abs" style="left:12.50px;top:531.54px;font-size:9.2px;line-height:11px;letter-spacing:-0.150px;color:#d6d6d6;white-space:pre;transform:scaleX(0.9463);transform-origin:0 0;">48</div>
<div class="abs" style="left:24px;top:537.5px;width:1.8px;height:1px;background:#d0d0d0"></div>
<div class="abs" style="left:25px;top:531.3px;width:1px;height:1px;background:#c8c8c8"></div>
<div class="abs" style="left:6.00px;top:613.2px;font-size:9.2px;line-height:11px;letter-spacing:-0.214px;color:#d6d6d6;white-space:pre;">-10.0</div>
<div class="abs" style="left:12.50px;top:630.3000000000001px;font-size:9.2px;line-height:11px;letter-spacing:-0.150px;color:#d6d6d6;white-space:pre;transform:scaleX(0.9463);transform-origin:0 0;">12</div>
<div class="abs" style="left:24px;top:636.3px;width:1.8px;height:1px;background:#d0d0d0"></div>
<div class="abs" style="left:25px;top:630.1px;width:1px;height:1px;background:#c8c8c8"></div>
<div class="abs" style="left:12.50px;top:641.3800000000001px;font-size:9.2px;line-height:11px;letter-spacing:-0.150px;color:#d6d6d6;white-space:pre;transform:scaleX(0.9463);transform-origin:0 0;">24</div>
<div class="abs" style="left:24px;top:647.4px;width:1.8px;height:1px;background:#d0d0d0"></div>
<div class="abs" style="left:25px;top:641.2px;width:1px;height:1px;background:#c8c8c8"></div>
<div class="abs" style="left:12.50px;top:652.46px;font-size:9.2px;line-height:11px;letter-spacing:-0.150px;color:#d6d6d6;white-space:pre;transform:scaleX(0.9463);transform-origin:0 0;">36</div>
<div class="abs" style="left:24px;top:658.5px;width:1.8px;height:1px;background:#d0d0d0"></div>
<div class="abs" style="left:25px;top:652.3px;width:1px;height:1px;background:#c8c8c8"></div>
<div class="abs" style="left:12.50px;top:663.5400000000001px;font-size:9.2px;line-height:11px;letter-spacing:-0.150px;color:#d6d6d6;white-space:pre;transform:scaleX(0.9463);transform-origin:0 0;">48</div>
<div class="abs" style="left:24px;top:669.5px;width:1.8px;height:1px;background:#d0d0d0"></div>
<div class="abs" style="left:25px;top:663.3px;width:1px;height:1px;background:#c8c8c8"></div>
<div class="abs" style="left:32px;top:406px;width:1218px;height:268px;background:#4d6a90"></div>
<div class="abs" style="left:1252px;top:406px;width:9px;height:268px;background:#303030"></div>
<div class="abs" style="left:32px;top:468.5px;width:1218px;height:2.5px;background:#141e2e"></div>
<div class="abs" style="left:32px;top:478px;width:1218px;height:1px;background:#1c2a40"></div>
<div class="abs" style="left:32px;top:545px;width:1218px;height:1.5px;background:#1c2a40"></div>
<div class="abs" style="left:32px;top:609px;width:1218px;height:2px;background:#1c2a40"></div>
<svg class="abs" style="left:32px;top:470.5px" width="8" height="9"><path d="M0.4 1.2L3.4 3.9L0.4 6.6Z" fill="#4d6a90" stroke="#ececec" stroke-width="0.8"/></svg>
<div class="abs" style="left:32px;top:406px;width:68px;height:21.8px;background:#64428e;overflow:hidden;box-sizing:border-box;border-left:1px solid rgba(16,8,36,0.55);border-right:1px solid rgba(16,8,36,0.55)"></div>
<svg class="abs" style="left:62px;top:411.2px" width="15.5" height="14.5"><use href="#gen"/></svg>
<svg class="abs" style="left:83px;top:410.6px" width="15" height="15"><use href="#ham"/></svg>
<div class="abs" style="left:104px;top:406px;width:22.5px;height:21.8px;background:#64428e;overflow:hidden;box-sizing:border-box;border-left:1px solid rgba(16,8,36,0.55);border-right:1px solid rgba(16,8,36,0.55)"></div>
<div class="abs" style="left:178.5px;top:406px;width:140px;height:21.8px;background:#64428e;overflow:hidden;box-sizing:border-box;border-left:1px solid rgba(16,8,36,0.55);border-right:1px solid rgba(16,8,36,0.55)"></div>
<div class="abs" style="left:181.90px;top:409.5px;font-size:11.5px;line-height:15px;letter-spacing:-0.150px;color:#fbf4ff;white-space:pre;transform:scaleX(0.8608);transform-origin:0 0;">VEGAS Ti&hellip;</div>
<svg class="abs" style="left:241.3px;top:411.2px" width="15.5" height="14.5"><use href="#gen"/></svg>
<svg class="abs" style="left:261.5px;top:410.6px" width="15" height="15"><use href="#crop"/></svg>
<svg class="abs" style="left:281.8px;top:410.6px" width="15" height="15"><use href="#fx"/></svg>
<svg class="abs" style="left:302px;top:410.6px" width="15" height="15"><use href="#ham"/></svg>
<div class="abs" style="left:385.5px;top:406px;width:77.5px;height:21.8px;background:#64428e;overflow:hidden;box-sizing:border-box;border-left:1px solid rgba(16,8,36,0.55);border-right:1px solid rgba(16,8,36,0.55)"></div>
<svg class="abs" style="left:405.3px;top:411.2px" width="15.5" height="14.5"><use href="#gen"/></svg>
<svg class="abs" style="left:425.8px;top:410.6px" width="15" height="15"><use href="#fx"/></svg>
<svg class="abs" style="left:446px;top:410.6px" width="15" height="15"><use href="#ham"/></svg>
<div class="abs" style="left:463.5px;top:406px;width:70px;height:21.8px;background:#64428e;overflow:hidden;box-sizing:border-box;border-left:1px solid rgba(16,8,36,0.55);border-right:1px solid rgba(16,8,36,0.55)"></div>
<svg class="abs" style="left:496.6px;top:411.2px" width="15.5" height="14.5"><use href="#gen"/></svg>
<svg class="abs" style="left:517.5px;top:410.6px" width="15" height="15"><use href="#ham"/></svg>
<div class="abs" style="left:1014.5px;top:406px;width:86.5px;height:21.8px;background:#64428e;overflow:hidden;box-sizing:border-box;border-left:1px solid rgba(16,8,36,0.55);border-right:1px solid rgba(16,8,36,0.55)"></div>
<svg class="abs" style="left:1043.6px;top:411.2px" width="15.5" height="14.5"><use href="#gen"/></svg>
<svg class="abs" style="left:1064.3px;top:410.6px" width="15" height="15"><use href="#fx"/></svg>
<svg class="abs" style="left:1084.3px;top:410.6px" width="15" height="15"><use href="#ham"/></svg>
<div class="abs" style="left:1188.3px;top:406px;width:61.7px;height:21.8px;background:#64428e;overflow:hidden;box-sizing:border-box;border-left:1px solid rgba(16,8,36,0.55);border-right:1px solid rgba(16,8,36,0.55)"></div>
<svg class="abs" style="left:1213.6px;top:411.2px" width="15.5" height="14.5"><use href="#gen"/></svg>
<svg class="abs" style="left:1234.8px;top:410.6px" width="15" height="15"><use href="#ham"/></svg>
<svg class="abs" style="left:0;top:406px" width="1261" height="5"><g fill="#8e96c0" fill-opacity="0.5"><path d="M46.5 0H52.9L49.7 3.4Z"/><path d="M70.6 0H77.0L73.8 3.4Z"/><path d="M92.2 0H98.6L95.4 3.4Z"/><path d="M111.8 0H118.2L115.0 3.4Z"/><path d="M197.9 0H204.3L201.1 3.4Z"/><path d="M220.5 0H226.9L223.7 3.4Z"/><path d="M243.1 0H249.5L246.3 3.4Z"/><path d="M265.7 0H272.1L268.9 3.4Z"/><path d="M288.3 0H294.7L291.5 3.4Z"/><path d="M310.9 0H317.3L314.1 3.4Z"/><path d="M404.9 0H411.3L408.1 3.4Z"/><path d="M427.5 0H433.9L430.7 3.4Z"/><path d="M450.1 0H456.5L453.3 3.4Z"/><path d="M482.9 0H489.3L486.1 3.4Z"/><path d="M505.5 0H511.9L508.7 3.4Z"/><path d="M1033.9 0H1040.3L1037.1 3.4Z"/><path d="M1056.5 0H1062.9L1059.7 3.4Z"/><path d="M1079.1 0H1085.5L1082.3 3.4Z"/><path d="M1207.7 0H1214.1L1210.9 3.4Z"/><path d="M1230.3 0H1236.7L1233.5 3.4Z"/></g></svg>
<div class="abs" style="left:32px;top:427.7px;width:68px;height:1.2px;background:#140f24"></div>
<div class="abs" style="left:104px;top:427.7px;width:22.5px;height:1.2px;background:#140f24"></div>
<div class="abs" style="left:178.5px;top:427.7px;width:140px;height:1.2px;background:#140f24"></div>
<div class="abs" style="left:385.5px;top:427.7px;width:148px;height:1.2px;background:#140f24"></div>
<div class="abs" style="left:1014.5px;top:427.7px;width:86.5px;height:1.2px;background:#140f24"></div>
<div class="abs" style="left:1188.3px;top:427.7px;width:61.7px;height:1.2px;background:#140f24"></div>
<div class="abs" style="left:0;top:0;z-index:6">
<svg class="abs" style="left:32px;top:428.3px" width="68" height="39.7"><defs><pattern id="ck1" x="0" y="0.5" width="18" height="18" patternUnits="userSpaceOnUse"><rect width="18" height="18" fill="#d3d3d3"/><rect width="9" height="9" fill="#adadad"/><rect x="9" y="9" width="9" height="9" fill="#adadad"/></pattern></defs><path d="M4 0.5H64L68 4.5V37.9L66.8 39.1H0V4.5Z" fill="url(#ck1)"/><path d="M4 0.5H64L68 4.5V37.9L66.8 39.1H0V4.5Z" fill="none" stroke="#26262c" stroke-width="1" stroke-opacity="0.85"/></svg>
<svg class="abs" style="left:104px;top:428.3px" width="22.5" height="39.7"><defs><pattern id="ck2" x="0" y="0.5" width="18" height="18" patternUnits="userSpaceOnUse"><rect width="18" height="18" fill="#d3d3d3"/><rect width="9" height="9" fill="#adadad"/><rect x="9" y="9" width="9" height="9" fill="#adadad"/></pattern></defs><path d="M4 0.5H18.5L22.5 4.5V37.9L21.3 39.1H0V4.5Z" fill="url(#ck2)"/><path d="M4 0.5H18.5L22.5 4.5V37.9L21.3 39.1H0V4.5Z" fill="none" stroke="#26262c" stroke-width="1" stroke-opacity="0.85"/></svg>
<svg class="abs" style="left:178.5px;top:428.3px" width="68.5" height="39.7"><defs><pattern id="ck3" x="0" y="0.5" width="18" height="18" patternUnits="userSpaceOnUse"><rect width="18" height="18" fill="#d3d3d3"/><rect width="9" height="9" fill="#adadad"/><rect x="9" y="9" width="9" height="9" fill="#adadad"/></pattern></defs><path d="M4 0.5H64.5L68.5 4.5V37.9L67.3 39.1H0V4.5Z" fill="url(#ck3)"/><path d="M4 0.5H64.5L68.5 4.5V37.9L67.3 39.1H0V4.5Z" fill="none" stroke="#26262c" stroke-width="1" stroke-opacity="0.85"/></svg>
<div class="abs" style="left:247px;top:429px;width:3px;height:39px;background:#64428e"></div>
<svg class="abs" style="left:250px;top:428.3px" width="68.5" height="39.7"><defs><pattern id="ck4" x="0" y="0.5" width="18" height="18" patternUnits="userSpaceOnUse"><rect width="18" height="18" fill="#d3d3d3"/><rect width="9" height="9" fill="#adadad"/><rect x="9" y="9" width="9" height="9" fill="#adadad"/></pattern></defs><path d="M4 0.5H64.5L68.5 4.5V37.9L67.3 39.1H0V4.5Z" fill="url(#ck4)"/><path d="M4 0.5H64.5L68.5 4.5V37.9L67.3 39.1H0V4.5Z" fill="none" stroke="#26262c" stroke-width="1" stroke-opacity="0.85"/></svg>
<svg class="abs" style="left:385.5px;top:428.3px" width="69" height="39.7"><defs><pattern id="ck5" x="0" y="0.5" width="18" height="18" patternUnits="userSpaceOnUse"><rect width="18" height="18" fill="#d3d3d3"/><rect width="9" height="9" fill="#adadad"/><rect x="9" y="9" width="9" height="9" fill="#adadad"/></pattern></defs><path d="M4 0.5H69L69 0.5V39.1L69 39.1H0V4.5Z" fill="url(#ck5)"/><path d="M4 0.5H69L69 0.5V39.1L69 39.1H0V4.5Z" fill="none" stroke="#26262c" stroke-width="1" stroke-opacity="0.85"/></svg>
<div class="abs" style="left:454.5px;top:429px;width:9px;height:39px;background:#64428e"></div>
<svg class="abs" style="left:463.5px;top:428.3px" width="70" height="39.7"><defs><pattern id="ck6" x="0" y="0.5" width="18" height="18" patternUnits="userSpaceOnUse"><rect width="18" height="18" fill="#d3d3d3"/><rect width="9" height="9" fill="#adadad"/><rect x="9" y="9" width="9" height="9" fill="#adadad"/></pattern></defs><path d="M2 0.5H66L70 4.5V37.9L68.8 39.1H0V2.5Z" fill="url(#ck6)"/><path d="M2 0.5H66L70 4.5V37.9L68.8 39.1H0V2.5Z" fill="none" stroke="#26262c" stroke-width="1" stroke-opacity="0.85"/></svg>
<svg class="abs" style="left:1014.5px;top:428.3px" width="67.5" height="39.7"><defs><pattern id="ck7" x="0" y="0.5" width="18" height="18" patternUnits="userSpaceOnUse"><rect width="18" height="18" fill="#d3d3d3"/><rect width="9" height="9" fill="#adadad"/><rect x="9" y="9" width="9" height="9" fill="#adadad"/></pattern></defs><path d="M4 0.5H67.5L67.5 0.5V39.1L67.5 39.1H0V4.5Z" fill="url(#ck7)"/><path d="M4 0.5H67.5L67.5 0.5V39.1L67.5 39.1H0V4.5Z" fill="none" stroke="#26262c" stroke-width="1" stroke-opacity="0.85"/></svg>
<svg class="abs" style="left:1082px;top:429px" width="19" height="39"><path d="M0 0H15L19 4V39H0Z" fill="url(#dithp)"/></svg>
<svg class="abs" style="left:1188.3px;top:428.3px" width="61.7" height="39.7"><defs><pattern id="ck8" x="0" y="0.5" width="18" height="18" patternUnits="userSpaceOnUse"><rect width="18" height="18" fill="#d3d3d3"/><rect width="9" height="9" fill="#adadad"/><rect x="9" y="9" width="9" height="9" fill="#adadad"/></pattern></defs><path d="M4 0.5H58.7L61.7 3.5V37.9L60.5 39.1H0V4.5Z" fill="url(#ck8)"/><path d="M4 0.5H58.7L61.7 3.5V37.9L60.5 39.1H0V4.5Z" fill="none" stroke="#26262c" stroke-width="1" stroke-opacity="0.85"/></svg>
<div class="abs" style="left:32px;top:429px;width:68px;height:39px;overflow:hidden"><div class="abs" style="left:3.00px;top:13.7px;font-size:9.5px;line-height:12px;letter-spacing:-0.009px;color:rgba(92,92,92,0.78);white-space:pre;">(Media Offline)</div></div>
<div class="abs" style="left:104px;top:429px;width:22.5px;height:39px;overflow:hidden"><div class="abs" style="left:4.60px;top:13.7px;font-size:9.5px;line-height:12px;letter-spacing:-0.009px;color:rgba(92,92,92,0.78);white-space:pre;">(Media Offline)</div></div>
<div class="abs" style="left:217.00px;top:442.7px;font-size:9.5px;line-height:12px;letter-spacing:-0.009px;color:rgba(92,92,92,0.78);white-space:pre;">(Media Offline)</div>
<div class="abs" style="left:385.5px;top:429px;width:69px;height:39px;overflow:hidden"><div class="abs" style="left:13.00px;top:13.7px;font-size:9.5px;line-height:12px;letter-spacing:-0.009px;color:rgba(92,92,92,0.78);white-space:pre;">(Media Offline)</div></div>
<div class="abs" style="left:476px;top:429px;width:57.5px;height:39px;overflow:hidden"><div class="abs" style="left:-7.50px;top:13.7px;font-size:9.5px;line-height:12px;letter-spacing:-0.009px;color:rgba(92,92,92,0.78);white-space:pre;">(Media Offline)</div></div>
<div class="abs" style="left:1014.5px;top:429px;width:67.5px;height:39px;overflow:hidden"><div class="abs" style="left:11.50px;top:13.50000000000001px;font-size:9.5px;line-height:12px;letter-spacing:-0.009px;color:rgba(92,92,92,0.78);white-space:pre;">(Media Offline)</div></div>
<div class="abs" style="left:1188.3px;top:429px;width:61.7px;height:39px;overflow:hidden"><div class="abs" style="left:3.70px;top:13.50000000000001px;font-size:9.5px;line-height:12px;letter-spacing:-0.009px;color:rgba(92,92,92,0.78);white-space:pre;">(Media Offline)</div></div>
<div class="abs wt" style="left:42px;top:429.5px;width:17px;height:1.6px;opacity:0.8"></div>
<svg class="abs" style="left:0;top:406px" width="1261" height="64"><path d="M41.3 23V62M92.5 23V62" stroke="#222" stroke-width="1" fill="none"/><path d="M32.5 61L41 24M92.6 24L99.5 61" stroke="#1a1ad0" stroke-width="1.2" fill="none"/><path d="M59 22.5H74L72 25.5H61Z" fill="#1414dc"/><path d="M32 61.5V57l4.5 4.5Z" fill="#fff"/><path d="M104 61.5V57l4.5 4.5Z" fill="#fff"/><path d="M178.5 61.5V57l4.5 4.5Z" fill="#fff"/><path d="M385.5 61.5V57l4.5 4.5Z" fill="#fff"/><path d="M463.5 61.5V57l4.5 4.5Z" fill="#fff"/><path d="M1188.3 61.5V57l4.5 4.5Z" fill="#fff"/><path d="M1014.5 61.5V57l4.5 4.5Z" fill="#fff"/><path d="M104 22.5h4.5l-4.5 4.5Z" fill="#1414dc"/><path d="M126.5 22.5h-4.5l4.5 4.5Z" fill="#1414dc"/><path d="M178.5 22.5h4.5l-4.5 4.5Z" fill="#1414dc"/><path d="M318.5 22.5h-4.5l4.5 4.5Z" fill="#1414dc"/><path d="M385.5 22.5h4.5l-4.5 4.5Z" fill="#1414dc"/><path d="M533.5 22.5h-4.5l4.5 4.5Z" fill="#1414dc"/><path d="M1250 22.5h-4.5l4.5 4.5Z" fill="#1414dc"/><path d="M241.5 22.5H255L253 25.5H243.5Z" fill="#1414dc"/><path d="M417 22.5H432L430 25.5H419Z" fill="#1414dc"/><path d="M497 22.5H512L510 25.5H499Z" fill="#1414dc"/><path d="M476 23V62" stroke="#222" stroke-width="1"/><path d="M465.5 24C468 36 472 50 475.5 61M475.5 24C472 36 468 50 465.5 61" stroke="#1a1ad0" stroke-width="1.1" fill="none"/><path d="M1038.3 23V62" stroke="#222" stroke-width="1"/><path d="M1015.5 61C1024 58 1028 31.5 1038 31.5H1083C1092 31.5 1094 58 1100.5 61" stroke="#1a1ad0" stroke-width="1.3" fill="none"/><path d="M1053 31.5H1067.5L1065 34.5H1055.5Z" fill="#1414dc"/><path d="M1228.3 23V62" stroke="#222" stroke-width="1"/><path d="M1189.5 61C1202 56 1214 24 1228 23.5" stroke="#1a1ad0" stroke-width="1.3" fill="none"/></svg>
<div class="abs wt" style="left:189px;top:441px;width:51px;"></div>
<div class="abs wt" style="left:260px;top:441px;width:51px;"></div>
<div class="abs wt" style="left:389px;top:436.3px;width:61px;height:2px;opacity:0.8"></div>
<div class="abs wt" style="left:500px;top:457px;width:16px;height:3px"></div>
<div class="abs" style="left:1017.00px;top:436.2px;font-size:9.6px;line-height:11px;letter-spacing:-0.327px;color:rgba(255,255,255,0.92);white-space:pre;font-weight:bold;">WHY ARE YOU</div>
<div class="abs" style="left:1017.00px;top:447.2px;font-size:9.6px;line-height:11px;letter-spacing:-0.336px;color:rgba(255,255,255,0.92);white-space:pre;font-weight:bold;">STILL HERE?</div>
</div>
<div class="abs" style="left:187.5px;top:479.5px;width:131px;height:21.5px;background:#4a93a8;overflow:hidden;box-sizing:border-box;border-left:1px solid rgba(16,8,36,0.55);border-right:1px solid rgba(16,8,36,0.55)"></div>
<div class="abs" style="left:190.90px;top:483.0px;font-size:11.5px;line-height:15px;letter-spacing:-0.150px;color:#e4ffff;white-space:pre;transform:scaleX(0.9410);transform-origin:0 0;">Yakety Sax- Music</div>
<svg class="abs" style="left:281.6px;top:484.1px" width="15" height="15"><use href="#fx"/></svg>
<svg class="abs" style="left:301.7px;top:484.1px" width="15" height="15"><use href="#ham"/></svg>
<svg class="abs" style="left:187.5px;top:501px" width="131" height="43.5"><rect x="0" y="0" width="131" height="43" fill="#5599ad"/><path d="M0 4L4 0H16.5V43H0Z" fill="url(#dith)"/><path d="M74.5 0H127L131 4V43H74.5Z" fill="url(#dith)"/><rect x="0" y="0" width="131" height="0.8" fill="#23505c"/><path d="M0 21.5H131" stroke="#2b6473" stroke-width="1"/><path d="M16.5 0V43M74.5 0V43" stroke="#23505c" stroke-width="1"/><path d="M1.5 9.7V11.9M2.5 9.3V12.3M3.5 9.3V12.3M4.5 7.7V13.9M5.5 8.6V13.0M6.5 7.9V13.7M7.5 7.5V14.1M8.5 7.8V13.8M9.5 6.6V15.0M10.5 6.8V14.8M11.5 7.9V13.7M12.5 7.1V14.5M13.5 8.0V13.6M14.5 7.3V14.3M15.5 6.6V15.0M16.5 5.8V15.8M17.5 6.1V15.5M18.5 5.8V15.8M19.5 7.4V14.2M20.5 7.2V14.4M21.5 6.8V14.8M22.5 7.0V14.6M23.5 6.9V14.7M24.5 6.5V15.1M25.5 5.9V15.7M26.5 5.8V15.8M27.5 5.7V15.9M28.5 7.3V14.3M29.5 5.7V15.9M30.5 6.5V15.1M31.5 7.2V14.4M32.5 6.5V15.1M33.5 7.5V14.1M34.5 5.7V15.9M35.5 4.9V16.7M36.5 7.3V14.3M37.5 6.1V15.5M38.5 7.5V14.1M39.5 7.5V14.1M40.5 7.0V14.6M41.5 5.7V15.9M42.5 5.7V15.9M43.5 7.5V14.1M44.5 7.6V14.0M45.5 6.8V14.8M46.5 7.3V14.3M47.5 4.9V16.7M48.5 5.8V15.8M49.5 6.9V14.7M50.5 6.6V15.0M51.5 6.5V15.1M52.5 6.4V15.2M53.5 6.6V15.0M54.5 6.2V15.4M55.5 7.0V14.6M56.5 6.6V15.0M57.5 7.6V14.0M58.5 6.5V15.1M59.5 5.1V16.5M60.5 7.5V14.1M61.5 6.7V14.9M62.5 6.9V14.7M63.5 6.2V15.4M64.5 5.6V16.0M65.5 5.7V15.9M66.5 6.7V14.9M67.5 7.0V14.6M68.5 7.0V14.6M69.5 6.5V15.1M70.5 6.9V14.7M71.5 7.6V14.0M72.5 6.2V15.4M73.5 7.2V14.4M74.5 7.2V14.4M75.5 7.0V14.6M76.5 7.7V13.9M77.5 7.3V14.3M78.5 7.2V14.4M79.5 7.7V13.9M80.5 6.9V14.7M81.5 7.3V14.3M82.5 7.9V13.7M83.5 7.8V13.8M84.5 6.9V14.7M85.5 7.8V13.8M86.5 7.3V14.3M87.5 7.8V13.8M88.5 7.9V13.7M89.5 8.0V13.6M90.5 7.9V13.7M91.5 7.9V13.7M92.5 8.3V13.3M93.5 6.6V15.0M94.5 7.3V14.3M95.5 7.4V14.2M96.5 8.4V13.2M97.5 7.7V13.9M98.5 8.2V13.4M99.5 8.4V13.2M100.5 8.8V12.8M101.5 8.6V13.0M102.5 8.9V12.7M103.5 8.3V13.3M104.5 8.1V13.5M105.5 8.5V13.1M106.5 7.8V13.8M107.5 8.9V12.7M108.5 8.7V12.9M109.5 8.4V13.2M110.5 9.0V12.6M111.5 8.6V13.0M112.5 8.7V12.9M113.5 9.3V12.3M114.5 8.8V12.8M115.5 8.9V12.7M116.5 9.0V12.6M117.5 9.6V12.0M118.5 9.1V12.5M119.5 8.9V12.7M120.5 9.4V12.2M121.5 9.5V12.1M122.5 9.8V11.8M123.5 9.3V12.3M124.5 9.9V11.7M125.5 9.5V12.1M126.5 9.4V12.2M127.5 9.9V11.7M128.5 9.8V11.8M129.5 10.0V11.6" stroke="#b0d8e0" stroke-width="1.05" fill="none"/><path d="M1.5 32.2V34.0M2.5 31.9V34.3M3.5 30.7V35.5M4.5 30.6V35.6M5.5 30.9V35.3M6.5 30.5V35.7M7.5 30.4V35.8M8.5 28.8V37.4M9.5 29.0V37.2M10.5 30.0V36.2M11.5 29.3V36.9M12.5 28.9V37.3M13.5 30.2V36.0M14.5 29.2V37.0M15.5 30.1V36.1M16.5 29.7V36.5M17.5 28.2V38.0M18.5 29.3V36.9M19.5 28.8V37.4M20.5 28.3V37.9M21.5 29.1V37.1M22.5 29.1V37.1M23.5 29.3V36.9M24.5 29.8V36.4M25.5 27.4V38.8M26.5 28.9V37.3M27.5 29.3V36.9M28.5 29.5V36.7M29.5 29.5V36.7M30.5 29.4V36.8M31.5 28.5V37.7M32.5 28.8V37.4M33.5 29.7V36.5M34.5 27.8V38.4M35.5 28.7V37.5M36.5 29.3V36.9M37.5 29.0V37.2M38.5 27.3V38.9M39.5 28.1V38.1M40.5 28.0V38.2M41.5 27.7V38.5M42.5 28.4V37.8M43.5 28.1V38.1M44.5 28.3V37.9M45.5 29.5V36.7M46.5 29.7V36.5M47.5 28.0V38.2M48.5 29.9V36.3M49.5 27.8V38.4M50.5 29.2V37.0M51.5 29.7V36.5M52.5 29.1V37.1M53.5 29.8V36.4M54.5 27.8V38.4M55.5 29.6V36.6M56.5 27.5V38.7M57.5 28.0V38.2M58.5 28.9V37.3M59.5 29.1V37.1M60.5 29.0V37.2M61.5 29.1V37.1M62.5 27.6V38.6M63.5 28.2V38.0M64.5 28.9V37.3M65.5 27.7V38.5M66.5 29.5V36.7M67.5 28.2V38.0M68.5 29.8V36.4M69.5 28.8V37.4M70.5 29.1V37.1M71.5 28.6V37.6M72.5 28.5V37.7M73.5 29.7V36.5M74.5 28.2V38.0M75.5 28.4V37.8M76.5 29.0V37.2M77.5 29.1V37.1M78.5 29.3V36.9M79.5 29.1V37.1M80.5 28.8V37.4M81.5 30.2V36.0M82.5 28.8V37.4M83.5 30.4V35.8M84.5 30.3V35.9M85.5 29.5V36.7M86.5 28.9V37.3M87.5 29.8V36.4M88.5 29.3V36.9M89.5 30.7V35.5M90.5 30.7V35.5M91.5 30.6V35.6M92.5 29.8V36.4M93.5 30.1V36.1M94.5 30.7V35.5M95.5 30.5V35.7M96.5 30.0V36.2M97.5 30.4V35.8M98.5 29.9V36.3M99.5 30.6V35.6M100.5 30.5V35.7M101.5 30.8V35.4M102.5 30.7V35.5M103.5 29.8V36.4M104.5 31.3V34.9M105.5 31.0V35.2M106.5 31.1V35.1M107.5 31.0V35.2M108.5 31.4V34.8M109.5 30.4V35.8M110.5 31.1V35.1M111.5 30.9V35.3M112.5 31.6V34.6M113.5 31.6V34.6M114.5 31.1V35.1M115.5 31.2V35.0M116.5 31.2V35.0M117.5 31.8V34.4M118.5 31.7V34.5M119.5 31.4V34.8M120.5 32.0V34.2M121.5 31.8V34.4M122.5 31.7V34.5M123.5 32.1V34.1M124.5 31.8V34.4M125.5 31.9V34.3M126.5 32.0V34.2M127.5 32.1V34.1M128.5 32.0V34.2M129.5 32.1V34.1" stroke="#b0d8e0" stroke-width="1.05" fill="none"/><path d="M0.8 42C2 30 7 17 16.5 16.5H74.5C98 16.5 112 28 131 43" stroke="#1428c8" stroke-width="1.4" fill="none"/><path d="M37.5 16.5H52.5L50 20H40Z" fill="#1428c8"/><path d="M0 43V38.5l4.5 4.5Z" fill="#fff"/></svg>
<div class="abs" style="left:273px;top:531px;width:41px;height:11.5px;background:#fff;font-size:11.5px;line-height:12px;text-align:center;color:#000;letter-spacing:-0.2px;overflow:hidden">131.2%</div>
<svg class="abs" style="left:300px;top:528px" width="20" height="17"><path d="M0 0C7 5 13 11 18.5 16" stroke="#1428c8" stroke-width="1.3" fill="none" opacity="0.85"/></svg>
<div class="abs" style="left:32px;top:547px;width:146.5px;height:22px;background:#64428e;overflow:hidden;box-sizing:border-box;border-left:1px solid rgba(16,8,36,0.55);border-right:1px solid rgba(16,8,36,0.55)"></div>
<div class="abs" style="left:35.40px;top:550.5px;font-size:11.5px;line-height:15px;letter-spacing:-0.150px;color:#fbf4ff;white-space:pre;transform:scaleX(0.9417);transform-origin:0 0;">test2MP4_</div>
<svg class="abs" style="left:121.5px;top:551.6px" width="15" height="15"><use href="#crop"/></svg>
<svg class="abs" style="left:142.10000000000002px;top:551.6px" width="15" height="15"><use href="#fx"/></svg>
<svg class="abs" style="left:162px;top:551.6px" width="15" height="15"><use href="#ham"/></svg>
<div class="abs" style="left:178.5px;top:547px;width:140px;height:22px;background:#64428e;overflow:hidden;box-sizing:border-box;border-left:1px solid rgba(16,8,36,0.55);border-right:1px solid rgba(16,8,36,0.55)"></div>
<div class="abs" style="left:181.90px;top:550.5px;font-size:11.5px;line-height:15px;letter-spacing:-0.150px;color:#fbf4ff;white-space:pre;transform:scaleX(0.9417);transform-origin:0 0;">test2MP4_</div>
<svg class="abs" style="left:261.5px;top:551.6px" width="15" height="15"><use href="#crop"/></svg>
<svg class="abs" style="left:282.1px;top:551.6px" width="15" height="15"><use href="#fx"/></svg>
<svg class="abs" style="left:302px;top:551.6px" width="15" height="15"><use href="#ham"/></svg>
<div class="abs" style="left:178px;top:547px;width:1px;height:62px;background:#2a1c40"></div>
<div class="abs" style="left:318px;top:547px;width:926px;height:62.5px;background:#c6c83a"></div>
<div class="abs" style="left:320px;top:549px;width:922px;height:20px;background:#64428e;overflow:hidden;box-sizing:border-box;border-left:1px solid rgba(16,8,36,0.55);border-right:1px solid rgba(16,8,36,0.55)"></div>
<svg class="abs" style="left:1186.8px;top:551.6px" width="15" height="15"><use href="#crop"/></svg>
<svg class="abs" style="left:1207.5px;top:551.6px" width="15" height="15"><use href="#fx"/></svg>
<svg class="abs" style="left:1227px;top:551.6px" width="15" height="15"><use href="#ham"/></svg>
<div class="abs" style="left:322.40px;top:550.5px;font-size:11.5px;line-height:15px;letter-spacing:-0.150px;color:#f0e4ff;white-space:pre;transform:scaleX(0.9417);transform-origin:0 0;">test2MP4_</div>
<div class="abs" style="left:320px;top:569px;width:922px;height:38.5px;background:#6872aa"></div>
<div class="abs" style="left:32px;top:568.7px;width:286px;height:1px;background:#1a1430"></div>
<div class="abs" style="left:320px;top:568.7px;width:922px;height:1px;background:#1a1430"></div>
<div class="abs" style="left:32px;top:569.5px;width:286px;height:39.5px;background:#64428e"></div>
<div class="abs" style="left:0;top:0;z-index:6">
<svg class="abs" style="left:32px;top:569.5px" width="68" height="39" viewBox="0 0 68 39"><defs><linearGradient id="g1" x1="0" y1="0" x2="0" y2="1"><stop offset="0" stop-color="#5f86b6"/><stop offset="0.3" stop-color="#6a8cae"/><stop offset="0.55" stop-color="#4c6a78"/><stop offset="0.8" stop-color="#3c4a3a"/><stop offset="1" stop-color="#4a4a38"/></linearGradient></defs><rect width="68" height="39" fill="url(#g1)"/><path d="M0 10L6 7L12 11L20 6L30 12L42 8L54 14L68 9V22H0Z" fill="#7e96aa" opacity="0.7"/><path d="M0 20L8 17L18 22L30 18L44 23L56 19L68 22V39H0Z" fill="#3e5454" opacity="0.85"/><path d="M0 29L10 26L22 31L36 28L50 32L68 29V39H0Z" fill="#39402c" opacity="0.95"/><rect x="15.7" y="30.7" width="2.8" height="1.7" fill="#6a7458" opacity="0.7"/><rect x="38.3" y="31.7" width="1.5" height="1.4" fill="#485640" opacity="0.7"/><rect x="65.7" y="29.5" width="2.0" height="2.0" fill="#7a806a" opacity="0.7"/><rect x="9.9" y="32.2" width="1.8" height="1.0" fill="#7a806a" opacity="0.7"/><rect x="51.3" y="24.6" width="1.1" height="2.2" fill="#7a806a" opacity="0.7"/><rect x="54.4" y="26.3" width="2.4" height="2.3" fill="#7a806a" opacity="0.7"/><rect x="47.1" y="36.7" width="2.5" height="1.9" fill="#485640" opacity="0.7"/><rect x="63.6" y="24.1" width="1.2" height="1.2" fill="#6a7458" opacity="0.7"/><rect x="14.3" y="37.4" width="2.6" height="2.3" fill="#485640" opacity="0.7"/><rect x="27.8" y="35.3" width="1.7" height="1.9" fill="#7a806a" opacity="0.7"/><rect x="38.6" y="36.5" width="2.7" height="2.5" fill="#5a6a4a" opacity="0.7"/><rect x="44.3" y="24.6" width="2.9" height="2.4" fill="#6a7458" opacity="0.7"/><rect x="37.6" y="33.4" width="2.3" height="2.5" fill="#2a3226" opacity="0.7"/><rect x="17.6" y="24.0" width="2.7" height="2.5" fill="#485640" opacity="0.7"/><rect x="5.8" y="34.8" width="2.8" height="1.0" fill="#485640" opacity="0.7"/><rect x="28.2" y="28.6" width="1.1" height="1.9" fill="#5a6a4a" opacity="0.7"/><rect x="3.0" y="33.5" width="2.1" height="2.4" fill="#6a7458" opacity="0.7"/><rect x="18.4" y="25.8" width="1.6" height="1.1" fill="#5a6a4a" opacity="0.7"/><rect x="39.6" y="22.5" width="2.9" height="1.4" fill="#2a3226" opacity="0.7"/><rect x="17.4" y="33.0" width="1.6" height="2.4" fill="#6a7458" opacity="0.7"/><rect x="59.2" y="28.0" width="2.7" height="1.6" fill="#485640" opacity="0.7"/><rect x="57.2" y="32.9" width="2.2" height="2.4" fill="#5a6a4a" opacity="0.7"/><rect x="33.5" y="28.9" width="2.9" height="1.7" fill="#2a3226" opacity="0.7"/><rect x="17.0" y="26.8" width="1.0" height="1.6" fill="#6a7458" opacity="0.7"/><rect x="38.3" y="22.3" width="2.2" height="1.2" fill="#7a806a" opacity="0.7"/><rect x="41.8" y="27.3" width="2.4" height="1.5" fill="#6a7458" opacity="0.7"/><rect x="46.7" y="33.8" width="2.2" height="2.4" fill="#5a6a4a" opacity="0.7"/><rect x="1.4" y="27.9" width="1.6" height="1.9" fill="#485640" opacity="0.7"/><rect x="11.7" y="25.0" width="2.7" height="1.4" fill="#6a7458" opacity="0.7"/><rect x="52.0" y="23.7" width="2.9" height="2.0" fill="#5a6a4a" opacity="0.7"/><rect x="8.7" y="30.0" width="1.5" height="1.3" fill="#6a7458" opacity="0.7"/><rect x="28.7" y="33.2" width="2.2" height="2.4" fill="#5a6a4a" opacity="0.7"/><rect x="44.5" y="25.6" width="1.2" height="2.1" fill="#2a3226" opacity="0.7"/><rect x="14.4" y="31.1" width="1.5" height="1.2" fill="#6a7458" opacity="0.7"/><rect x="35.0" y="25.1" width="1.4" height="1.4" fill="#7a806a" opacity="0.7"/><rect x="53.3" y="32.3" width="1.7" height="1.2" fill="#7a806a" opacity="0.7"/><rect x="19.3" y="34.7" width="1.9" height="2.0" fill="#6a7458" opacity="0.7"/><rect x="19.2" y="31.1" width="2.8" height="1.2" fill="#5a6a4a" opacity="0.7"/><rect x="0.3" y="37.1" width="3.0" height="1.7" fill="#7a806a" opacity="0.7"/><rect x="62.7" y="36.8" width="1.1" height="1.7" fill="#2a3226" opacity="0.7"/><rect x="12" y="4.2" width="39.2" height="28" fill="#e2e2e6"/><rect x="14.5" y="7" width="1.5" height="1.2" fill="#333"/><rect x="15" y="11" width="7" height="1.2" fill="#444"/><rect x="26" y="18" width="10" height="1" fill="#666"/><rect x="24" y="22" width="14" height="1" fill="#777"/><rect x="26" y="26" width="4" height="1" fill="#555"/><rect x="15" y="27.5" width="2" height="1" fill="#555"/><rect x="33" y="30.5" width="16" height="1.2" fill="#555"/><rect x="9" y="20" width="3" height="1.4" fill="#e8e8e8"/><rect x="10" y="11" width="1.5" height="3" fill="#e8e8e8"/><rect x="51.2" y="3.2" width="16.8" height="5.5" fill="#d8a634"/><rect x="53" y="4" width="12" height="1.4" fill="#b83a20"/><rect x="56" y="6.4" width="10" height="1.3" fill="#a83018"/><rect x="51.2" y="8.7" width="16.8" height="4.6" fill="#e8e8e8"/><rect x="53" y="9.8" width="13" height="1.6" fill="#222"/></svg>
<svg class="abs" style="left:110px;top:569.5px" width="68" height="39" viewBox="0 0 68 39"><defs><radialGradient id="gs1" cx="18" cy="3" r="50" gradientUnits="userSpaceOnUse"><stop offset="0" stop-color="#fffadc"/><stop offset="0.09" stop-color="#ffd088"/><stop offset="0.22" stop-color="#e8843c"/><stop offset="0.42" stop-color="#b45424"/><stop offset="0.65" stop-color="#74341c"/><stop offset="0.85" stop-color="#4a2216"/><stop offset="1" stop-color="#341a14"/></radialGradient></defs><rect width="68" height="39" fill="url(#gs1)"/><rect x="0" y="0" width="4" height="28" fill="#30160e" opacity="0.35"/><rect x="8" y="0" width="3" height="28" fill="#30160e" opacity="0.25"/><rect x="30" y="0" width="4" height="28" fill="#30160e" opacity="0.3"/><rect x="38" y="0" width="7" height="28" fill="#30160e" opacity="0.42"/><rect x="48" y="0" width="6" height="28" fill="#30160e" opacity="0.45"/><rect x="57" y="0" width="5" height="28" fill="#30160e" opacity="0.4"/><rect x="63" y="0" width="5" height="28" fill="#30160e" opacity="0.5"/><rect x="4.0" y="8.8" width="1.5" height="1.8" fill="#fff0e8" opacity="0.73"/><rect x="6.9" y="9.6" width="1.6" height="1.4" fill="#fff0e8" opacity="0.50"/><rect x="4.4" y="6.5" width="2.0" height="0.9" fill="#fff0e8" opacity="0.76"/><rect x="2.5" y="2.5" width="0.8" height="1.1" fill="#fff0e8" opacity="0.78"/><rect x="5.2" y="11.4" width="1.8" height="1.5" fill="#fff0e8" opacity="0.56"/><rect x="0.7" y="1.9" width="1.4" height="1.2" fill="#fff0e8" opacity="0.73"/><rect x="0.2" y="5.4" width="1.3" height="1.1" fill="#fff0e8" opacity="0.55"/><rect x="48.0" y="8.0" width="1.6" height="1.6" fill="#fff0e8" opacity="0.42"/><rect x="36.0" y="5.8" width="0.9" height="1.2" fill="#fff0e8" opacity="0.55"/><rect x="35.5" y="0.5" width="1.3" height="1.1" fill="#fff0e8" opacity="0.55"/><rect x="7.7" y="7.8" width="1.8" height="1.0" fill="#fff0e8" opacity="0.51"/><rect x="8.9" y="10.5" width="1.4" height="1.5" fill="#fff0e8" opacity="0.41"/><rect x="3.8" y="10.4" width="1.9" height="1.5" fill="#fff0e8" opacity="0.66"/><rect x="26.5" y="7.4" width="1.6" height="1.4" fill="#fff0e8" opacity="0.47"/><rect x="0.0" y="2.8" width="1.3" height="1.6" fill="#fff0e8" opacity="0.43"/><rect x="35.2" y="3.5" width="2.0" height="0.8" fill="#fff0e8" opacity="0.76"/><rect x="32.8" y="5.0" width="1.4" height="1.8" fill="#fff0e8" opacity="0.53"/><rect x="33.3" y="2.2" width="1.1" height="2.0" fill="#fff0e8" opacity="0.66"/><rect x="35.4" y="2.9" width="2.0" height="1.0" fill="#fff0e8" opacity="0.43"/><rect x="44.6" y="5.7" width="1.2" height="2.1" fill="#fff0e8" opacity="0.49"/><rect x="9.6" y="2.9" width="1.9" height="1.0" fill="#fff0e8" opacity="0.49"/><rect x="7.3" y="1.6" width="1.0" height="2.1" fill="#fff0e8" opacity="0.50"/><rect x="43.5" y="13.2" width="2.1" height="1.1" fill="#fff0e8" opacity="0.52"/><rect x="50.1" y="7.4" width="1.9" height="2.2" fill="#fff0e8" opacity="0.53"/><rect x="6.6" y="4.4" width="1.1" height="1.9" fill="#fff0e8" opacity="0.54"/><rect x="44.5" y="10.9" width="1.0" height="1.0" fill="#fff0e8" opacity="0.49"/><rect x="46.0" y="29.7" width="3.0" height="1.8" fill="#8a4020" opacity="0.45"/><rect x="18.6" y="17.5" width="2.6" height="1.4" fill="#50241a" opacity="0.45"/><rect x="40.6" y="25.4" width="3.0" height="1.2" fill="#c0602c" opacity="0.45"/><rect x="35.1" y="26.0" width="1.8" height="1.8" fill="#50241a" opacity="0.45"/><rect x="7.7" y="16.2" width="1.9" height="2.2" fill="#8a4020" opacity="0.45"/><rect x="55.1" y="15.5" width="1.7" height="2.4" fill="#50241a" opacity="0.45"/><rect x="12.6" y="8.4" width="1.7" height="3.0" fill="#50241a" opacity="0.45"/><rect x="36.1" y="17.2" width="2.6" height="1.0" fill="#8a4020" opacity="0.45"/><rect x="29.0" y="24.9" width="2.8" height="2.6" fill="#c0602c" opacity="0.45"/><rect x="46.7" y="27.2" width="1.5" height="1.2" fill="#50241a" opacity="0.45"/><rect x="2.9" y="24.3" width="1.3" height="2.0" fill="#50241a" opacity="0.45"/><rect x="50.5" y="33.9" width="2.7" height="2.5" fill="#c0602c" opacity="0.45"/><rect x="44.9" y="30.2" width="1.4" height="2.7" fill="#c0602c" opacity="0.45"/><rect x="1.7" y="22.3" width="2.7" height="1.7" fill="#3a1a10" opacity="0.45"/><rect x="38.6" y="10.4" width="1.7" height="1.7" fill="#8a4020" opacity="0.45"/><rect x="61.8" y="18.8" width="1.2" height="1.2" fill="#c0602c" opacity="0.45"/><rect x="10.6" y="14.8" width="2.0" height="2.7" fill="#50241a" opacity="0.45"/><rect x="14.4" y="22.0" width="2.8" height="1.0" fill="#50241a" opacity="0.45"/><rect x="57.4" y="11.9" width="3.0" height="2.7" fill="#c0602c" opacity="0.45"/><rect x="5.5" y="13.8" width="2.1" height="2.6" fill="#c0602c" opacity="0.45"/><rect x="49.2" y="12.8" width="2.6" height="1.7" fill="#50241a" opacity="0.45"/><rect x="54.5" y="26.9" width="1.0" height="1.4" fill="#50241a" opacity="0.45"/><rect x="32.7" y="22.8" width="2.2" height="2.4" fill="#50241a" opacity="0.45"/><rect x="29.7" y="14.6" width="1.0" height="1.8" fill="#8a4020" opacity="0.45"/><rect x="50.1" y="17.3" width="2.0" height="1.4" fill="#8a4020" opacity="0.45"/><rect x="27.9" y="34.8" width="2.4" height="2.0" fill="#3a1a10" opacity="0.45"/><rect x="21.4" y="11.7" width="1.9" height="1.9" fill="#50241a" opacity="0.45"/><rect x="25.9" y="15.6" width="1.3" height="2.2" fill="#8a4020" opacity="0.45"/><rect x="36.5" y="34.5" width="2.0" height="2.6" fill="#3a1a10" opacity="0.45"/><rect x="19.7" y="13.3" width="2.9" height="2.3" fill="#3a1a10" opacity="0.45"/><rect x="50" y="23" width="15" height="4" fill="#5a545c" opacity="0.7"/><rect x="61.5" y="34" width="3" height="2" fill="#e8b050"/><rect x="50" y="34.5" width="2" height="1.2" fill="#c89040" opacity="0.7"/></svg>
<svg class="abs" style="left:179px;top:569.5px" width="68" height="39" viewBox="0 0 68 39"><defs><radialGradient id="gs2" cx="18" cy="3" r="50" gradientUnits="userSpaceOnUse"><stop offset="0" stop-color="#fffadc"/><stop offset="0.09" stop-color="#ffd088"/><stop offset="0.22" stop-color="#e8843c"/><stop offset="0.42" stop-color="#b45424"/><stop offset="0.65" stop-color="#74341c"/><stop offset="0.85" stop-color="#4a2216"/><stop offset="1" stop-color="#341a14"/></radialGradient></defs><rect width="68" height="39" fill="url(#gs2)"/><rect x="0" y="0" width="4" height="28" fill="#30160e" opacity="0.35"/><rect x="8" y="0" width="3" height="28" fill="#30160e" opacity="0.25"/><rect x="30" y="0" width="4" height="28" fill="#30160e" opacity="0.3"/><rect x="38" y="0" width="7" height="28" fill="#30160e" opacity="0.42"/><rect x="48" y="0" width="6" height="28" fill="#30160e" opacity="0.45"/><rect x="57" y="0" width="5" height="28" fill="#30160e" opacity="0.4"/><rect x="63" y="0" width="5" height="28" fill="#30160e" opacity="0.5"/><rect x="41.0" y="2.0" width="2.0" height="1.0" fill="#fff0e8" opacity="0.54"/><rect x="32.4" y="1.1" width="2.0" height="1.5" fill="#fff0e8" opacity="0.35"/><rect x="1.5" y="7.8" width="2.2" height="0.9" fill="#fff0e8" opacity="0.54"/><rect x="47.4" y="13.9" width="0.8" height="2.0" fill="#fff0e8" opacity="0.42"/><rect x="26.6" y="0.1" width="1.7" height="1.7" fill="#fff0e8" opacity="0.42"/><rect x="6.8" y="7.5" width="1.4" height="1.9" fill="#fff0e8" opacity="0.56"/><rect x="49.9" y="9.3" width="1.1" height="2.0" fill="#fff0e8" opacity="0.74"/><rect x="5.1" y="8.9" width="1.6" height="1.6" fill="#fff0e8" opacity="0.55"/><rect x="1.6" y="5.1" width="1.6" height="1.4" fill="#fff0e8" opacity="0.76"/><rect x="40.3" y="1.0" width="2.1" height="1.4" fill="#fff0e8" opacity="0.43"/><rect x="6.0" y="8.9" width="1.8" height="2.1" fill="#fff0e8" opacity="0.80"/><rect x="7.7" y="7.3" width="0.9" height="1.1" fill="#fff0e8" opacity="0.46"/><rect x="3.8" y="8.9" width="1.2" height="1.7" fill="#fff0e8" opacity="0.54"/><rect x="8.1" y="12.4" width="1.8" height="1.3" fill="#fff0e8" opacity="0.39"/><rect x="1.5" y="8.6" width="1.4" height="1.1" fill="#fff0e8" opacity="0.41"/><rect x="7.8" y="0.5" width="0.8" height="1.3" fill="#fff0e8" opacity="0.53"/><rect x="4.3" y="4.4" width="0.9" height="1.3" fill="#fff0e8" opacity="0.79"/><rect x="26.8" y="6.7" width="1.5" height="2.1" fill="#fff0e8" opacity="0.75"/><rect x="27.7" y="11.4" width="1.5" height="1.1" fill="#fff0e8" opacity="0.54"/><rect x="5.9" y="13.0" width="1.3" height="1.1" fill="#fff0e8" opacity="0.73"/><rect x="2.7" y="8.1" width="1.8" height="1.6" fill="#fff0e8" opacity="0.63"/><rect x="5.5" y="10.4" width="1.4" height="1.1" fill="#fff0e8" opacity="0.52"/><rect x="8.3" y="8.8" width="2.1" height="1.8" fill="#fff0e8" opacity="0.44"/><rect x="9.7" y="2.9" width="1.6" height="2.0" fill="#fff0e8" opacity="0.59"/><rect x="7.3" y="8.6" width="1.2" height="1.0" fill="#fff0e8" opacity="0.47"/><rect x="6.4" y="2.9" width="2.0" height="1.9" fill="#fff0e8" opacity="0.49"/><rect x="43.8" y="32.7" width="2.4" height="1.1" fill="#8a4020" opacity="0.45"/><rect x="39.2" y="27.8" width="2.4" height="1.5" fill="#c0602c" opacity="0.45"/><rect x="43.5" y="23.7" width="1.7" height="2.4" fill="#50241a" opacity="0.45"/><rect x="59.1" y="22.3" width="1.8" height="2.2" fill="#8a4020" opacity="0.45"/><rect x="56.8" y="26.5" width="1.3" height="2.1" fill="#c0602c" opacity="0.45"/><rect x="42.3" y="33.8" width="2.7" height="2.7" fill="#8a4020" opacity="0.45"/><rect x="29.2" y="8.9" width="2.2" height="2.5" fill="#3a1a10" opacity="0.45"/><rect x="37.4" y="33.4" width="1.0" height="2.7" fill="#3a1a10" opacity="0.45"/><rect x="33.1" y="31.8" width="2.1" height="1.4" fill="#8a4020" opacity="0.45"/><rect x="25.6" y="32.1" width="1.7" height="1.7" fill="#8a4020" opacity="0.45"/><rect x="47.6" y="17.2" width="2.1" height="2.8" fill="#3a1a10" opacity="0.45"/><rect x="45.7" y="28.1" width="1.6" height="1.8" fill="#8a4020" opacity="0.45"/><rect x="22.0" y="9.4" width="2.5" height="1.2" fill="#8a4020" opacity="0.45"/><rect x="50.4" y="25.7" width="2.3" height="2.3" fill="#c0602c" opacity="0.45"/><rect x="54.8" y="17.7" width="3.0" height="1.8" fill="#50241a" opacity="0.45"/><rect x="13.9" y="30.8" width="1.0" height="1.9" fill="#3a1a10" opacity="0.45"/><rect x="56.3" y="21.9" width="1.4" height="1.9" fill="#50241a" opacity="0.45"/><rect x="52.8" y="13.8" width="1.5" height="1.6" fill="#8a4020" opacity="0.45"/><rect x="16.3" y="11.5" width="1.8" height="1.9" fill="#3a1a10" opacity="0.45"/><rect x="49.1" y="11.9" width="2.5" height="2.8" fill="#8a4020" opacity="0.45"/><rect x="48.7" y="11.1" width="2.3" height="1.3" fill="#8a4020" opacity="0.45"/><rect x="12.2" y="14.3" width="2.2" height="2.5" fill="#c0602c" opacity="0.45"/><rect x="20.7" y="36.2" width="1.3" height="1.5" fill="#8a4020" opacity="0.45"/><rect x="14.9" y="11.8" width="2.7" height="1.7" fill="#50241a" opacity="0.45"/><rect x="11.9" y="27.8" width="1.2" height="2.0" fill="#3a1a10" opacity="0.45"/><rect x="65.5" y="19.2" width="2.6" height="2.7" fill="#50241a" opacity="0.45"/><rect x="48.4" y="11.5" width="1.1" height="2.4" fill="#8a4020" opacity="0.45"/><rect x="13.3" y="18.4" width="2.3" height="2.5" fill="#3a1a10" opacity="0.45"/><rect x="58.3" y="22.5" width="1.2" height="2.5" fill="#c0602c" opacity="0.45"/><rect x="63.9" y="25.0" width="1.1" height="2.7" fill="#8a4020" opacity="0.45"/><rect x="50" y="23" width="15" height="4" fill="#5a545c" opacity="0.7"/><rect x="61.5" y="34" width="3" height="2" fill="#e8b050"/><rect x="50" y="34.5" width="2" height="1.2" fill="#c89040" opacity="0.7"/></svg>
<svg class="abs" style="left:320px;top:569.5px" width="67" height="38" viewBox="0 0 67 38"><rect width="67" height="38" fill="#111317"/><rect x="26.9" y="13.4" width="4.3" height="5.4" fill="#0c0e12" opacity="0.7"/><rect x="19.6" y="16.7" width="3.6" height="4.8" fill="#1a2030" opacity="0.7"/><rect x="35.8" y="1.5" width="4.2" height="6.7" fill="#15181e" opacity="0.7"/><rect x="55.2" y="15.2" width="4.7" height="2.6" fill="#0c0e12" opacity="0.7"/><rect x="29.4" y="33.3" width="3.4" height="5.4" fill="#1a2030" opacity="0.7"/><rect x="45.8" y="31.9" width="4.4" height="3.1" fill="#1c1e2a" opacity="0.7"/><rect x="46.0" y="32.0" width="9.4" height="4.0" fill="#1c1e2a" opacity="0.7"/><rect x="19.8" y="1.6" width="9.2" height="6.4" fill="#20222c" opacity="0.7"/><rect x="3.2" y="13.6" width="4.0" height="3.2" fill="#15181e" opacity="0.7"/><rect x="42.7" y="30.6" width="3.0" height="5.8" fill="#1a2030" opacity="0.7"/><rect x="11.5" y="30.7" width="3.1" height="2.4" fill="#1c1e2a" opacity="0.7"/><rect x="31.3" y="0.6" width="7.0" height="4.7" fill="#181c26" opacity="0.7"/><rect x="11.5" y="2.5" width="7.5" height="2.5" fill="#0c0e12" opacity="0.7"/><rect x="33.6" y="6.2" width="8.0" height="2.2" fill="#1a2030" opacity="0.7"/><rect x="15.7" y="24.6" width="8.2" height="5.7" fill="#0c0e12" opacity="0.7"/><rect x="33.4" y="1.2" width="5.8" height="6.5" fill="#20222c" opacity="0.7"/><rect x="9.4" y="18.2" width="5.6" height="5.4" fill="#20222c" opacity="0.7"/><rect x="34.2" y="27.9" width="9.1" height="2.5" fill="#181c26" opacity="0.7"/><rect x="51.1" y="13.2" width="5.8" height="6.9" fill="#0c0e12" opacity="0.7"/><rect x="33.3" y="0.7" width="5.3" height="4.2" fill="#1a2030" opacity="0.7"/><rect x="12.4" y="16.0" width="8.7" height="3.5" fill="#1c1e2a" opacity="0.7"/><rect x="16.5" y="18.6" width="3.2" height="5.9" fill="#181c26" opacity="0.7"/><rect x="46.8" y="17.9" width="8.4" height="4.8" fill="#20222c" opacity="0.7"/><rect x="3.8" y="23.3" width="9.7" height="4.0" fill="#181c26" opacity="0.7"/><rect x="21.6" y="31.0" width="4.0" height="3.5" fill="#1c1e2a" opacity="0.7"/><rect x="40.2" y="31.5" width="3.4" height="6.9" fill="#181c26" opacity="0.7"/><rect x="10.0" y="34.1" width="7.2" height="2.1" fill="#181c26" opacity="0.7"/><rect x="3.5" y="7.5" width="5.1" height="2.1" fill="#15181e" opacity="0.7"/><rect x="46.3" y="10.3" width="6.9" height="2.7" fill="#15181e" opacity="0.7"/><rect x="5.0" y="20.0" width="3.8" height="4.1" fill="#20222c" opacity="0.7"/><rect x="8.3" y="20.2" width="7.1" height="6.0" fill="#15181e" opacity="0.7"/><rect x="38.5" y="9.9" width="9.2" height="4.5" fill="#1a2030" opacity="0.7"/><rect x="5.8" y="1.7" width="3.9" height="6.0" fill="#1a2030" opacity="0.7"/><rect x="47.6" y="5.8" width="9.0" height="3.0" fill="#0c0e12" opacity="0.7"/><rect x="27.5" y="21.3" width="5.7" height="2.9" fill="#1a2030" opacity="0.7"/><rect x="28.0" y="34.1" width="3.5" height="5.3" fill="#1a2030" opacity="0.7"/><rect x="33.7" y="21.1" width="6.8" height="4.6" fill="#15181e" opacity="0.7"/><rect x="31.2" y="32.7" width="9.1" height="4.9" fill="#181c26" opacity="0.7"/><rect x="55.4" y="2.3" width="8.0" height="2.5" fill="#0c0e12" opacity="0.7"/><rect x="40.6" y="16.3" width="9.2" height="5.6" fill="#15181e" opacity="0.7"/><rect x="14" y="24" width="10" height="10" fill="#1c2440" opacity="0.55"/><rect x="16" y="30" width="7" height="3" fill="#2a3424" opacity="0.5"/><rect x="23" y="35" width="20" height="0.9" fill="#4c4c40" opacity="0.8"/><rect x="3.5" y="9" width="1.2" height="3" fill="#3a3c44" opacity="0.8"/><rect x="3.5" y="17" width="1.2" height="4" fill="#34363e" opacity="0.8"/><rect x="57.5" y="1.3" width="1.2" height="1.2" fill="#3a4030" opacity="0.8"/><rect x="51.4" y="5.1" width="1.2" height="1.2" fill="#3a4030" opacity="0.8"/><rect x="53.2" y="9.7" width="1.2" height="1.2" fill="#3a4030" opacity="0.8"/><rect x="56.0" y="5.5" width="1.2" height="1.2" fill="#3a4030" opacity="0.8"/><rect x="51.4" y="6.6" width="1.2" height="1.2" fill="#3a4030" opacity="0.8"/><rect x="49.2" y="1.4" width="1.2" height="1.2" fill="#3a4030" opacity="0.8"/><rect x="53.7" y="6.3" width="1.2" height="1.2" fill="#3a4030" opacity="0.8"/><rect x="49.1" y="1.3" width="1.2" height="1.2" fill="#3a4030" opacity="0.8"/><rect x="58.5" y="1.8" width="1.2" height="1.2" fill="#3a4030" opacity="0.8"/><rect x="48.4" y="6.6" width="1.2" height="1.2" fill="#3a4030" opacity="0.8"/><rect x="55.7" y="5.3" width="1.2" height="1.2" fill="#3a4030" opacity="0.8"/><rect x="57.8" y="1.7" width="1.2" height="1.2" fill="#3a4030" opacity="0.8"/><rect x="49.2" y="3.9" width="1.2" height="1.2" fill="#3a4030" opacity="0.8"/><rect x="54.5" y="5.0" width="1.2" height="1.2" fill="#3a4030" opacity="0.8"/><rect x="59.8" y="13.6" width="7.2" height="24.4" fill="#f4f4f0"/><rect x="63.5" y="16.5" width="1.4" height="1.4" fill="#333"/><rect x="61.5" y="23" width="3" height="1" fill="#f0b8c8"/><rect x="62" y="32.5" width="2" height="2" fill="#e0a070"/><rect x="64.5" y="35.5" width="1.2" height="1.2" fill="#222"/></svg>
<svg class="abs" style="left:746px;top:569.5px" width="68" height="38" viewBox="0 0 68 38"><rect width="68" height="38" fill="#3a4030"/><rect x="28.0" y="21.3" width="6.6" height="3.1" fill="#35402e" opacity="0.8"/><rect x="11.4" y="19.5" width="5.1" height="4.3" fill="#2a3024" opacity="0.8"/><rect x="27.7" y="5.4" width="4.7" height="4.6" fill="#4c5238" opacity="0.8"/><rect x="36.9" y="15.1" width="4.3" height="4.1" fill="#5a6048" opacity="0.8"/><rect x="38.6" y="31.6" width="2.3" height="1.6" fill="#35402e" opacity="0.8"/><rect x="37.2" y="29.6" width="3.6" height="3.6" fill="#35402e" opacity="0.8"/><rect x="32.2" y="24.3" width="4.5" height="3.8" fill="#3a4a44" opacity="0.8"/><rect x="40.6" y="15.5" width="4.8" height="4.8" fill="#2a3024" opacity="0.8"/><rect x="43.9" y="12.0" width="3.1" height="2.5" fill="#2a3024" opacity="0.8"/><rect x="34.9" y="4.1" width="2.5" height="2.5" fill="#2a3024" opacity="0.8"/><rect x="59.4" y="32.2" width="2.0" height="2.2" fill="#4c5238" opacity="0.8"/><rect x="29.1" y="37.3" width="4.0" height="1.8" fill="#35402e" opacity="0.8"/><rect x="48.3" y="10.3" width="2.4" height="2.7" fill="#606a50" opacity="0.8"/><rect x="47.0" y="4.5" width="3.2" height="1.9" fill="#4c5238" opacity="0.8"/><rect x="28.8" y="18.5" width="5.4" height="2.2" fill="#35402e" opacity="0.8"/><rect x="61.1" y="29.2" width="4.1" height="2.8" fill="#606a50" opacity="0.8"/><rect x="26.1" y="8.1" width="3.3" height="4.9" fill="#46503a" opacity="0.8"/><rect x="61.9" y="0.7" width="2.9" height="5.0" fill="#2a3024" opacity="0.8"/><rect x="2.6" y="5.6" width="4.2" height="1.5" fill="#222a20" opacity="0.8"/><rect x="51.5" y="14.7" width="2.4" height="2.2" fill="#35402e" opacity="0.8"/><rect x="1.0" y="14.0" width="5.1" height="1.9" fill="#3a4a44" opacity="0.8"/><rect x="51.6" y="5.2" width="3.9" height="3.7" fill="#46503a" opacity="0.8"/><rect x="56.3" y="31.1" width="3.2" height="2.2" fill="#35402e" opacity="0.8"/><rect x="42.6" y="14.8" width="4.4" height="1.8" fill="#4c5238" opacity="0.8"/><rect x="6.4" y="1.5" width="6.8" height="2.3" fill="#606a50" opacity="0.8"/><rect x="15.9" y="31.3" width="5.0" height="2.5" fill="#5a6048" opacity="0.8"/><rect x="57.6" y="37.1" width="2.6" height="3.2" fill="#2a3024" opacity="0.8"/><rect x="17.4" y="34.9" width="3.0" height="1.6" fill="#46503a" opacity="0.8"/><rect x="25.5" y="9.5" width="2.2" height="2.5" fill="#5a6048" opacity="0.8"/><rect x="5.7" y="5.3" width="4.3" height="2.7" fill="#5a6048" opacity="0.8"/><rect x="36.6" y="35.1" width="4.4" height="2.8" fill="#46503a" opacity="0.8"/><rect x="59.7" y="0.8" width="5.2" height="3.2" fill="#46503a" opacity="0.8"/><rect x="19.8" y="38.0" width="2.4" height="3.4" fill="#4c5238" opacity="0.8"/><rect x="55.8" y="28.0" width="5.5" height="4.3" fill="#222a20" opacity="0.8"/><rect x="21.8" y="26.0" width="6.5" height="4.5" fill="#606a50" opacity="0.8"/><rect x="58.5" y="1.2" width="4.5" height="1.6" fill="#606a50" opacity="0.8"/><rect x="23.5" y="0.5" width="2.4" height="1.8" fill="#2a3024" opacity="0.8"/><rect x="61.6" y="33.4" width="5.6" height="2.9" fill="#3a4a44" opacity="0.8"/><rect x="27.3" y="31.9" width="2.4" height="4.1" fill="#4c5238" opacity="0.8"/><rect x="19.2" y="3.3" width="2.1" height="4.9" fill="#2a3024" opacity="0.8"/><rect x="30.8" y="23.4" width="6.6" height="2.4" fill="#4c5238" opacity="0.8"/><rect x="22.8" y="5.4" width="5.1" height="3.3" fill="#222a20" opacity="0.8"/><rect x="40.9" y="16.8" width="6.5" height="2.6" fill="#46503a" opacity="0.8"/><rect x="12.3" y="16.4" width="6.0" height="4.7" fill="#35402e" opacity="0.8"/><rect x="23.8" y="22.2" width="3.6" height="2.0" fill="#3a4a44" opacity="0.8"/><rect x="21.7" y="34.0" width="2.2" height="1.7" fill="#46503a" opacity="0.8"/><rect x="51.0" y="4.3" width="4.4" height="4.7" fill="#606a50" opacity="0.8"/><rect x="23.7" y="19.8" width="5.4" height="4.0" fill="#3a4a44" opacity="0.8"/><rect x="19.9" y="31.5" width="3.4" height="3.6" fill="#46503a" opacity="0.8"/><rect x="35.4" y="11.7" width="6.0" height="1.6" fill="#5a6048" opacity="0.8"/><rect x="25.1" y="7.2" width="5.8" height="2.4" fill="#5a6048" opacity="0.8"/><rect x="49.4" y="37.4" width="2.6" height="1.9" fill="#222a20" opacity="0.8"/><rect x="59.4" y="26.0" width="3.0" height="3.2" fill="#5a6048" opacity="0.8"/><rect x="44.3" y="28.7" width="4.7" height="1.6" fill="#35402e" opacity="0.8"/><rect x="16.9" y="13.1" width="5.5" height="3.3" fill="#5a6048" opacity="0.8"/><rect x="24.4" y="30.1" width="6.5" height="1.8" fill="#606a50" opacity="0.8"/><rect x="8.1" y="17.2" width="5.1" height="4.7" fill="#606a50" opacity="0.8"/><rect x="34.1" y="24.8" width="4.5" height="4.4" fill="#222a20" opacity="0.8"/><rect x="28.7" y="24.8" width="3.0" height="4.0" fill="#2a3024" opacity="0.8"/><rect x="13.2" y="34.2" width="6.9" height="4.9" fill="#222a20" opacity="0.8"/><rect x="16.2" y="27.3" width="2.1" height="3.3" fill="#4c5238" opacity="0.8"/><rect x="27.3" y="20.9" width="5.8" height="3.2" fill="#4c5238" opacity="0.8"/><rect x="13.5" y="33.0" width="4.1" height="1.6" fill="#222a20" opacity="0.8"/><rect x="42.6" y="34.8" width="4.4" height="5.0" fill="#3a4a44" opacity="0.8"/><rect x="58.6" y="18.7" width="6.7" height="1.8" fill="#35402e" opacity="0.8"/><rect x="27.2" y="21.2" width="6.2" height="3.5" fill="#5a6048" opacity="0.8"/><rect x="32.4" y="32.1" width="4.8" height="2.6" fill="#606a50" opacity="0.8"/><rect x="59.2" y="33.1" width="5.0" height="2.6" fill="#5a6048" opacity="0.8"/><rect x="60.0" y="19.9" width="4.9" height="2.2" fill="#2a3024" opacity="0.8"/><rect x="31.2" y="23.0" width="2.1" height="4.9" fill="#606a50" opacity="0.8"/><rect x="33.7" y="37.6" width="2.6" height="1.8" fill="#5a6048" opacity="0.8"/><rect x="4.1" y="20.5" width="4.1" height="4.8" fill="#606a50" opacity="0.8"/><rect x="16.7" y="18.0" width="2.6" height="3.0" fill="#3a4a44" opacity="0.8"/><rect x="32.5" y="4.1" width="4.1" height="1.6" fill="#46503a" opacity="0.8"/><rect x="8.0" y="29.6" width="2.1" height="2.2" fill="#35402e" opacity="0.8"/><rect x="0.7" y="10.8" width="5.6" height="2.4" fill="#3a4a44" opacity="0.8"/><rect x="6.5" y="27.8" width="2.6" height="3.3" fill="#46503a" opacity="0.8"/><rect x="44.5" y="26.7" width="6.4" height="1.6" fill="#606a50" opacity="0.8"/><rect x="51.2" y="23.4" width="4.7" height="4.5" fill="#35402e" opacity="0.8"/><rect x="32.8" y="32.3" width="5.1" height="4.5" fill="#35402e" opacity="0.8"/><rect x="56.7" y="23.9" width="3.7" height="2.1" fill="#222a20" opacity="0.8"/><rect x="55.2" y="7.4" width="5.9" height="2.2" fill="#2a3024" opacity="0.8"/><rect x="8.3" y="9.1" width="5.6" height="2.4" fill="#2a3024" opacity="0.8"/><rect x="27.0" y="35.8" width="4.7" height="4.0" fill="#35402e" opacity="0.8"/><rect x="25.0" y="26.0" width="2.1" height="2.2" fill="#222a20" opacity="0.8"/><rect x="56.5" y="36.8" width="2.6" height="3.3" fill="#222a20" opacity="0.8"/><rect x="31.2" y="26.1" width="2.9" height="1.7" fill="#2a3024" opacity="0.8"/><rect x="1.5" y="29.0" width="5.1" height="4.7" fill="#3a4a44" opacity="0.8"/><rect x="9.1" y="7.0" width="3.0" height="4.4" fill="#46503a" opacity="0.8"/><rect x="57.5" y="3.6" width="2.3" height="4.8" fill="#3a4a44" opacity="0.8"/><rect x="14" y="22" width="44" height="12" fill="#3a4658" opacity="0.55"/><rect x="61" y="14" width="7" height="24" fill="#eeeee8"/><rect x="57" y="6" width="2" height="1.2" fill="#eee"/><rect x="60.5" y="6" width="2" height="1.2" fill="#eee"/><rect x="64" y="6" width="2" height="1.2" fill="#eee"/><rect x="26" y="35.2" width="17" height="1.1" fill="#f4f4f4"/><path d="M32 36.5h5l-2.5 2Z" fill="#f4f4f4"/><rect x="61" y="14" width="7" height="24" fill="#eeeee8"/><rect x="65" y="16" width="1.5" height="3" fill="#999"/><rect x="65.5" y="34" width="1.5" height="1.5" fill="#444"/></svg>
<svg class="abs" style="left:1175px;top:569.5px" width="67" height="38" viewBox="0 0 67 38"><defs><radialGradient id="gb" cx="30" cy="16" r="30" gradientUnits="userSpaceOnUse"><stop offset="0" stop-color="#56504e"/><stop offset="0.5" stop-color="#3a3634"/><stop offset="1" stop-color="#1e1a18"/></radialGradient></defs><rect width="67" height="38" fill="url(#gb)"/><rect x="37.1" y="24.3" width="1.1" height="2.4" fill="#1a1614" opacity="0.7"/><rect x="53.2" y="21.5" width="1.3" height="2.4" fill="#2a2624" opacity="0.7"/><rect x="18.3" y="18.3" width="1.7" height="3.2" fill="#1a1614" opacity="0.7"/><rect x="26.4" y="7.5" width="1.5" height="3.4" fill="#6a6664" opacity="0.7"/><rect x="12.9" y="20.5" width="1.4" height="3.9" fill="#2a2624" opacity="0.7"/><rect x="6.3" y="25.2" width="3.6" height="1.9" fill="#2a2624" opacity="0.7"/><rect x="54.1" y="18.2" width="1.5" height="3.9" fill="#2a2624" opacity="0.7"/><rect x="15.8" y="31.0" width="1.9" height="2.1" fill="#6a6664" opacity="0.7"/><rect x="14.3" y="6.4" width="2.0" height="3.5" fill="#5e5a58" opacity="0.7"/><rect x="35.3" y="19.9" width="1.2" height="2.1" fill="#48403c" opacity="0.7"/><rect x="21.3" y="22.9" width="2.4" height="3.1" fill="#2a2624" opacity="0.7"/><rect x="8.9" y="31.3" width="3.8" height="2.1" fill="#5e5a58" opacity="0.7"/><rect x="26.2" y="18.5" width="2.1" height="2.7" fill="#6a6664" opacity="0.7"/><rect x="6.5" y="3.4" width="2.9" height="3.9" fill="#2a2624" opacity="0.7"/><rect x="12.0" y="9.4" width="2.0" height="2.1" fill="#6a6664" opacity="0.7"/><rect x="32.2" y="25.3" width="2.8" height="3.3" fill="#5e5a58" opacity="0.7"/><rect x="24.4" y="10.9" width="3.8" height="1.3" fill="#6a6664" opacity="0.7"/><rect x="23.0" y="20.3" width="2.0" height="3.8" fill="#2a2624" opacity="0.7"/><rect x="33.3" y="11.4" width="1.9" height="3.4" fill="#48403c" opacity="0.7"/><rect x="37.3" y="23.6" width="4.0" height="1.5" fill="#48403c" opacity="0.7"/><rect x="8.4" y="31.6" width="3.8" height="1.1" fill="#1a1614" opacity="0.7"/><rect x="43.0" y="12.3" width="2.4" height="2.3" fill="#48403c" opacity="0.7"/><rect x="8.8" y="29.5" width="3.4" height="2.0" fill="#5e5a58" opacity="0.7"/><rect x="16.4" y="31.4" width="3.8" height="2.9" fill="#1a1614" opacity="0.7"/><rect x="45.4" y="5.2" width="2.1" height="1.2" fill="#6a6664" opacity="0.7"/><rect x="27.0" y="6.2" width="3.6" height="3.9" fill="#1a1614" opacity="0.7"/><rect x="28.7" y="16.6" width="2.4" height="1.9" fill="#48403c" opacity="0.7"/><rect x="26.2" y="6.4" width="3.5" height="2.6" fill="#6a6664" opacity="0.7"/><rect x="15.0" y="30.1" width="1.5" height="2.5" fill="#48403c" opacity="0.7"/><rect x="31.8" y="18.4" width="2.1" height="3.4" fill="#1a1614" opacity="0.7"/><rect x="44.7" y="22.8" width="3.3" height="2.1" fill="#5e5a58" opacity="0.7"/><rect x="41.2" y="10.4" width="1.8" height="3.9" fill="#6a6664" opacity="0.7"/><rect x="41.8" y="30.7" width="2.9" height="2.7" fill="#48403c" opacity="0.7"/><rect x="6.6" y="18.4" width="2.0" height="1.8" fill="#48403c" opacity="0.7"/><rect x="20.4" y="17.0" width="2.0" height="2.9" fill="#48403c" opacity="0.7"/><rect x="42.9" y="26.8" width="3.8" height="1.5" fill="#48403c" opacity="0.7"/><rect x="49.3" y="15.5" width="3.9" height="2.6" fill="#48403c" opacity="0.7"/><rect x="32.5" y="7.0" width="3.8" height="2.4" fill="#48403c" opacity="0.7"/><rect x="40.6" y="23.6" width="1.5" height="3.3" fill="#6a6664" opacity="0.7"/><rect x="35.0" y="22.0" width="1.9" height="2.7" fill="#6a6664" opacity="0.7"/><rect x="49.4" y="10.1" width="1.6" height="2.8" fill="#5e5a58" opacity="0.7"/><rect x="37.2" y="7.4" width="2.9" height="1.1" fill="#2a2624" opacity="0.7"/><rect x="29.6" y="8.8" width="3.7" height="1.3" fill="#5e5a58" opacity="0.7"/><rect x="54.4" y="16.5" width="1.1" height="2.4" fill="#1a1614" opacity="0.7"/><rect x="25.0" y="20.4" width="1.6" height="3.2" fill="#1a1614" opacity="0.7"/><rect x="24.7" y="12.5" width="3.6" height="3.6" fill="#48403c" opacity="0.7"/><rect x="40.4" y="18.4" width="2.6" height="1.9" fill="#5e5a58" opacity="0.7"/><rect x="20.8" y="17.4" width="1.9" height="2.1" fill="#1a1614" opacity="0.7"/><rect x="12.5" y="14.3" width="2.9" height="2.1" fill="#1a1614" opacity="0.7"/><rect x="13.1" y="19.9" width="2.4" height="1.6" fill="#1a1614" opacity="0.7"/><rect x="12.6" y="4.7" width="2.1" height="2.0" fill="#5e5a58" opacity="0.7"/><rect x="51.8" y="18.2" width="2.9" height="3.7" fill="#48403c" opacity="0.7"/><rect x="24.8" y="15.0" width="2.5" height="2.4" fill="#2a2624" opacity="0.7"/><rect x="41.4" y="13.5" width="2.8" height="1.8" fill="#2a2624" opacity="0.7"/><rect x="55.0" y="16.9" width="1.1" height="3.8" fill="#6a6664" opacity="0.7"/><rect x="21.4" y="29.9" width="2.4" height="1.4" fill="#2a2624" opacity="0.7"/><rect x="37.1" y="15.3" width="1.1" height="1.4" fill="#48403c" opacity="0.7"/><rect x="25.6" y="16.4" width="1.8" height="3.8" fill="#1a1614" opacity="0.7"/><rect x="45.1" y="9.4" width="3.5" height="3.2" fill="#48403c" opacity="0.7"/><rect x="20.3" y="16.8" width="2.6" height="3.6" fill="#6a6664" opacity="0.7"/><rect x="0" y="34" width="60" height="4" fill="#141210"/><rect x="60" y="14" width="7" height="24" fill="#f0f0ec"/><rect x="62" y="16" width="4" height="1" fill="#aab"/><rect x="62.5" y="31" width="2.5" height="2.5" fill="#c44"/><rect x="56" y="6" width="2" height="1.1" fill="#eee"/><rect x="59.5" y="6" width="2" height="1.1" fill="#eee"/><rect x="63" y="6" width="2" height="1.1" fill="#eee"/><rect x="28" y="28" width="3" height="1.2" fill="#eee"/></svg>
<div class="abs" style="left:746px;top:569.5px;width:61px;height:39px;overflow:hidden"><div class="abs" style="left:3.90px;top:13.900000000000045px;font-size:9.5px;line-height:12px;letter-spacing:-0.009px;color:#e6e6e6;white-space:pre;">(Media Offline)</div></div>
<div class="abs" style="left:32px;top:569.5px;width:146px;height:39px;overflow:hidden"><div class="abs" style="left:42.00px;top:13.7px;font-size:9.5px;line-height:12px;letter-spacing:-0.009px;color:rgba(150,145,150,0.42);white-space:pre;">(Media Offline)</div></div>
<div class="abs" style="left:179px;top:569.5px;width:68px;height:39px;overflow:hidden"><div class="abs" style="left:38.70px;top:13.7px;font-size:9.5px;line-height:12px;letter-spacing:-0.009px;color:rgba(170,160,160,0.5);white-space:pre;">(Media Offline)</div></div>
<svg class="abs" style="left:0;top:547px" width="1261" height="63"><path d="M247.5 39.3 L249.2 45.7 L250.9 39.3 L252.7 45.7 L254.4 39.3 L256.1 45.7 L257.8 39.3 L259.5 45.7 L261.3 39.3 L263.0 45.7 L264.7 39.3 L266.4 45.7 L268.1 39.3 L269.9 45.7 L271.6 39.3 L273.3 45.7 L275.0 39.3 L276.7 45.7 L278.5 39.3 L280.2 45.7 L281.9 39.3 L283.6 45.7 L285.3 39.3 L287.1 45.7 L288.8 39.3 L290.5 45.7 L292.2 39.3 L293.9 45.7 L295.7 39.3 L297.4 45.7 L299.1 39.3 L300.8 45.7 L302.5 39.3 L304.3 45.7 L306.0 39.3 L307.7 45.7 L309.4 39.3 L311.1 45.7 L312.9 39.3 L314.6 45.7 L316.3 39.3" stroke="#16101e" stroke-width="1" fill="none"/><path d="M173.5 22H184.5L179 27.5Z" fill="#1414dc"/><path d="M313.5 22H324.5L319 27.5Z" fill="#1414dc"/><path d="M32 22h4.5l-4.5 4.5Z" fill="#1414dc"/><path d="M100 22.3H111" stroke="#1414dc" stroke-width="1.6"/><path d="M246 22H262L260 24.5H248Z" fill="#1414dc"/><path d="M774 22H787L785 25H776Z" fill="#1414dc"/><path d="M1242 22V28.5L1236.5 22Z" fill="#1414dc"/><path d="M32 61.5V56.5l5 5Z" fill="#fff"/><path d="M179 61.5V56.5l5 5Z" fill="#fff"/><path d="M320 61.5V56.5l5 5Z" fill="#fff"/></svg>
</div>
<div class="abs" style="left:32px;top:611px;width:286px;height:63px;background:#36897a"></div>
<div class="abs" style="left:318px;top:610.5px;width:926px;height:64px;background:#7cb6f0"></div>
<div class="abs" style="left:320px;top:612.5px;width:922px;height:62px;background:#36897a"></div>
<div class="abs" style="left:32px;top:611px;width:146px;height:22px;background:#36897a;overflow:hidden;box-sizing:border-box;border-left:1px solid rgba(16,8,36,0.55);border-right:1px solid rgba(16,8,36,0.55)"></div>
<div class="abs" style="left:35.40px;top:614.5px;font-size:11.5px;line-height:15px;letter-spacing:-0.150px;color:#e4fff4;white-space:pre;transform:scaleX(0.9417);transform-origin:0 0;">test2MP4_</div>
<svg class="abs" style="left:142.10000000000002px;top:615.6px" width="15" height="15"><use href="#fx"/></svg>
<svg class="abs" style="left:162px;top:615.6px" width="15" height="15"><use href="#ham"/></svg>
<div class="abs" style="left:178.5px;top:611px;width:139.5px;height:22px;background:#36897a;overflow:hidden;box-sizing:border-box;border-left:1px solid rgba(16,8,36,0.55);border-right:1px solid rgba(16,8,36,0.55)"></div>
<div class="abs" style="left:181.90px;top:614.5px;font-size:11.5px;line-height:15px;letter-spacing:-0.150px;color:#e4fff4;white-space:pre;transform:scaleX(0.9417);transform-origin:0 0;">test2MP4_</div>
<svg class="abs" style="left:282.1px;top:615.6px" width="15" height="15"><use href="#fx"/></svg>
<svg class="abs" style="left:302px;top:615.6px" width="15" height="15"><use href="#ham"/></svg>
<div class="abs" style="left:320px;top:612.5px;width:922px;height:20.5px;background:#36897a;overflow:hidden;box-sizing:border-box;border-left:1px solid rgba(16,8,36,0.55);border-right:1px solid rgba(16,8,36,0.55)"></div>
<svg class="abs" style="left:1207.5px;top:615.6px" width="15" height="15"><use href="#fx"/></svg>
<svg class="abs" style="left:1227px;top:615.6px" width="15" height="15"><use href="#ham"/></svg>
<div class="abs" style="left:322.40px;top:614.5px;font-size:11.5px;line-height:15px;letter-spacing:-0.150px;color:#e4fff4;white-space:pre;transform:scaleX(0.9417);transform-origin:0 0;">test2MP4_</div>
<div class="abs" style="left:178px;top:611px;width:1px;height:63px;background:#1c4a42"></div>
<svg class="abs" style="left:0;top:633px" width="1261" height="41"><rect x="152" y="0" width="104" height="41" fill="url(#dithg)"/><path d="M32 0.5H318M320 0.5H1242" stroke="#153c34" stroke-width="1.2"/><path d="M32 21.5H318M320 21.5H1242" stroke="#1f5a50" stroke-width="1"/><path d="M152 0V41M255.7 0V41" stroke="#1c4a42" stroke-width="1"/><path d="M32 10.4H178M36.5 9.7V11.1M37.5 9.2V11.6M38.5 9.8V11.0M44.5 9.6V11.2M52.5 9.6V11.2M53.5 9.1V11.7M54.5 9.7V11.1M55.5 9.4V11.4M60.5 9.7V11.1M61.5 9.7V11.1M68.5 9.5V11.3M69.5 9.7V11.1M70.5 9.3V11.5M78.5 9.8V11.0M84.5 9.8V11.0M85.5 9.7V11.1M90.5 9.4V11.4M91.5 9.0V11.8M92.5 9.4V11.4M93.5 9.6V11.2M97.5 9.5V11.3M98.5 8.8V12.0M99.5 9.6V11.2M100.5 9.1V11.7M101.5 9.3V11.5M104.5 9.3V11.5M105.5 9.5V11.3M106.5 9.2V11.6M110.5 9.3V11.5M111.5 9.2V11.6M112.5 9.0V11.8M113.5 9.2V11.6M114.5 9.6V11.2M117.5 9.8V11.0M118.5 9.1V11.7M119.5 9.5V11.3M122.5 9.6V11.2M123.5 8.9V11.9M124.5 9.2V11.6M125.5 9.1V11.7M129.5 9.2V11.6M130.5 9.6V11.2M131.5 9.6V11.2M135.5 9.1V11.7M136.5 9.7V11.1M137.5 9.2V11.6M138.5 9.7V11.1M141.5 9.4V11.4M142.5 9.4V11.4M147.5 8.9V11.9M148.5 9.0V11.8M149.5 9.3V11.5M153.5 9.6V11.2M154.5 9.7V11.1M155.5 9.4V11.4M156.5 9.4V11.4M160.5 9.8V11.0M161.5 9.3V11.5M162.5 9.5V11.3M168.5 9.6V11.2M169.5 9.8V11.0M170.5 9.8V11.0" stroke="#93d4c6" stroke-width="1" fill="none" opacity="0.88"/><path d="M179 10.4H318M187.5 9.5V11.3M198.5 9.7V11.1M212.5 9.5V11.3M227.5 9.8V11.0M240.5 9.8V11.0M241.5 9.8V11.0M262.5 9.8V11.0M283.5 9.6V11.2M310.5 9.7V11.1M311.5 9.5V11.3M312.5 9.7V11.1" stroke="#93d4c6" stroke-width="1" fill="none" opacity="0.4"/><path d="M320 10.4H1242M333.5 9.5V11.3M334.5 8.8V12.0M335.5 9.6V11.2M337.5 8.4V12.4M338.5 9.2V11.6M339.5 9.0V11.8M340.5 8.0V12.8M342.5 9.4V11.4M343.5 9.0V11.8M344.5 9.1V11.7M358.5 9.7V11.1M439.5 9.4V11.4M440.5 9.6V11.2M441.5 9.1V11.7M450.5 9.8V11.0M451.5 9.6V11.2M452.5 9.8V11.0M477.5 9.4V11.4M478.5 9.0V11.8M479.5 9.4V11.4M506.5 9.6V11.2M507.5 9.5V11.3M508.5 8.8V12.0M509.5 9.6V11.2M510.5 9.1V11.7M511.5 9.3V11.5M512.5 9.1V11.7M513.5 9.4V11.4M514.5 9.1V11.7M515.5 9.2V11.6M516.5 9.1V11.7M517.5 8.9V11.9M518.5 9.2V11.6M531.5 9.5V11.3M532.5 9.6V11.2M533.5 8.8V12.0M534.5 9.2V11.6M535.5 9.5V11.3M536.5 8.8V12.0M537.5 9.1V11.7M538.5 9.0V11.8M539.5 8.8V12.0M540.5 9.4V11.4M541.5 9.3V11.5M542.5 8.8V12.0M578.5 9.5V11.3M591.5 9.7V11.1M610.5 9.1V11.7M611.5 8.9V11.9M612.5 9.0V11.8M613.5 9.3V11.5M614.5 9.6V11.2M615.5 9.6V11.2M616.5 9.3V11.5M617.5 9.3V11.5M634.5 9.5V11.3M650.5 9.2V11.6M651.5 9.0V11.8M652.5 9.4V11.4M653.5 9.4V11.4M654.5 9.6V11.2M655.5 9.3V11.5M656.5 9.4V11.4M657.5 9.2V11.6M658.5 9.3V11.5M659.5 8.9V11.9M660.5 8.8V12.0M661.5 9.5V11.3M662.5 9.3V11.5M663.5 9.5V11.3M672.5 9.6V11.2M673.5 9.4V11.4M674.5 9.8V11.0M690.5 9.0V11.8M691.5 9.4V11.4M692.5 9.7V11.1M693.5 9.0V11.8M694.5 9.4V11.4M695.5 9.5V11.3M696.5 9.3V11.5M697.5 9.5V11.3M698.5 9.3V11.5M699.5 9.3V11.5M700.5 9.3V11.5M701.5 9.2V11.6M712.5 9.8V11.0M729.5 9.7V11.1M730.5 9.8V11.0M745.5 8.1V12.7M746.5 8.5V12.3M747.5 8.2V12.6M748.5 7.8V13.0M749.5 9.1V11.7M750.5 9.2V11.6M751.5 9.0V11.8M752.5 8.7V12.1M753.5 8.4V12.4M754.5 8.2V12.6M755.5 8.7V12.1M756.5 7.9V12.9M757.5 9.2V11.6M758.5 8.0V12.8M759.5 8.9V11.9M760.5 8.0V12.8M761.5 9.2V11.6M762.5 7.8V13.0M763.5 8.1V12.7M764.5 7.8V13.0M765.5 8.4V12.4M766.5 9.0V11.8M770.5 9.2V11.6M771.5 9.6V11.2M772.5 9.8V11.0M773.5 9.5V11.3M777.5 8.2V12.6M778.5 8.3V12.5M779.5 8.8V12.0M780.5 8.8V12.0M781.5 8.1V12.7M782.5 8.3V12.5M783.5 8.8V12.0M784.5 8.3V12.5M785.5 7.9V12.9M786.5 7.9V12.9M787.5 8.3V12.5M788.5 8.4V12.4M789.5 8.5V12.3M790.5 8.7V12.1M791.5 8.7V12.1M792.5 8.3V12.5M796.5 9.7V11.1M797.5 9.3V11.5M798.5 9.3V11.5M799.5 9.4V11.4M800.5 9.8V11.0M804.5 9.7V11.1M805.5 9.6V11.2M806.5 9.8V11.0M811.5 9.4V11.4M812.5 9.5V11.3M813.5 9.7V11.1M818.5 9.6V11.2M826.5 9.8V11.0M827.5 9.6V11.2M828.5 9.5V11.3M845.5 9.7V11.1M868.5 9.5V11.3M869.5 9.3V11.5M870.5 9.4V11.4M890.5 9.5V11.3M891.5 9.5V11.3M914.5 9.7V11.1M915.5 9.7V11.1M916.5 9.5V11.3M934.5 9.1V11.7M935.5 9.6V11.2M936.5 9.1V11.7M937.5 9.2V11.6M960.5 9.7V11.1M961.5 9.7V11.1M985.5 9.5V11.3M986.5 9.6V11.2M1011.5 9.7V11.1M1036.5 9.7V11.1M1037.5 9.6V11.2M1038.5 9.1V11.7M1039.5 9.2V11.6M1040.5 9.6V11.2M1041.5 9.6V11.2M1048.5 9.7V11.1M1049.5 9.6V11.2M1070.5 9.7V11.1M1071.5 9.6V11.2M1100.5 9.6V11.2M1101.5 9.6V11.2M1127.5 8.8V12.0M1128.5 9.1V11.7M1129.5 9.0V11.8M1130.5 9.0V11.8M1131.5 8.9V11.9M1132.5 8.6V12.2M1133.5 9.2V11.6M1134.5 9.4V11.4M1140.5 9.6V11.2M1153.5 9.2V11.6M1154.5 9.5V11.3M1155.5 8.8V12.0M1156.5 9.3V11.5M1157.5 9.3V11.5M1158.5 8.8V12.0M1159.5 9.1V11.7M1165.5 9.8V11.0M1166.5 9.5V11.3M1188.5 9.0V11.8M1189.5 9.1V11.7M1190.5 8.4V12.4M1191.5 8.6V12.2M1192.5 8.7V12.1M1193.5 9.2V11.6M1194.5 8.6V12.2M1195.5 8.8V12.0M1196.5 8.6V12.2M1200.5 9.7V11.1M1201.5 9.4V11.4M1202.5 9.4V11.4M1212.5 9.6V11.2M1213.5 9.4V11.4M1214.5 9.3V11.5M1220.5 8.2V12.6M1221.5 8.3V12.5M1222.5 8.5V12.3M1223.5 9.2V11.6M1224.5 8.7V12.1M1225.5 8.6V12.2M1226.5 9.3V11.5M1227.5 8.9V11.9M1228.5 8.4V12.4M1231.5 8.1V12.7M1232.5 8.1V12.7M1233.5 9.2V11.6M1234.5 8.5V12.3M1235.5 8.2V12.6M1236.5 8.5V12.3M1237.5 8.9V11.9M1238.5 9.3V11.5M1239.5 8.1V12.7" stroke="#93d4c6" stroke-width="1" fill="none" opacity="0.88"/><path d="M32 32.6H178M36.5 31.6V33.6M38.5 31.7V33.5M45.5 31.8V33.4M53.5 31.6V33.6M54.5 31.7V33.5M55.5 31.6V33.6M60.5 31.8V33.4M68.5 32.0V33.2M69.5 31.7V33.5M70.5 32.0V33.2M84.5 31.7V33.5M85.5 31.7V33.5M90.5 31.5V33.7M91.5 31.9V33.3M92.5 31.4V33.8M93.5 31.7V33.5M97.5 31.8V33.4M98.5 31.6V33.6M99.5 31.7V33.5M100.5 31.9V33.3M101.5 31.6V33.6M104.5 31.8V33.4M105.5 31.7V33.5M106.5 31.5V33.7M110.5 31.6V33.6M111.5 31.7V33.5M112.5 31.4V33.8M113.5 31.3V33.9M114.5 31.7V33.5M117.5 31.5V33.7M119.5 32.0V33.2M122.5 31.9V33.3M123.5 31.4V33.8M124.5 31.5V33.7M125.5 31.5V33.7M129.5 31.9V33.3M130.5 31.8V33.4M131.5 31.6V33.6M135.5 32.0V33.2M136.5 32.0V33.2M137.5 32.0V33.2M138.5 31.8V33.4M141.5 31.7V33.5M142.5 31.8V33.4M147.5 31.7V33.5M148.5 31.7V33.5M149.5 31.9V33.3M153.5 31.4V33.8M154.5 31.8V33.4M155.5 31.9V33.3M156.5 31.9V33.3M160.5 31.7V33.5M161.5 32.0V33.2M162.5 31.6V33.6M169.5 32.0V33.2" stroke="#93d4c6" stroke-width="1" fill="none" opacity="0.88"/><path d="M179 32.6H318M186.5 31.8V33.4M197.5 32.0V33.2M210.5 31.8V33.4M212.5 31.9V33.3M226.5 32.0V33.2M227.5 32.0V33.2M240.5 31.8V33.4M263.5 32.0V33.2M300.5 32.0V33.2M301.5 32.0V33.2M310.5 31.8V33.4M312.5 31.8V33.4" stroke="#93d4c6" stroke-width="1" fill="none" opacity="0.4"/><path d="M320 32.6H1242M333.5 31.3V33.9M334.5 32.0V33.2M335.5 31.4V33.8M337.5 31.5V33.7M338.5 30.6V34.6M339.5 31.7V33.5M340.5 30.7V34.5M342.5 31.3V33.9M343.5 31.2V34.0M344.5 31.1V34.1M439.5 31.8V33.4M440.5 31.6V33.6M441.5 31.9V33.3M450.5 31.9V33.3M451.5 32.0V33.2M452.5 31.6V33.6M454.5 31.9V33.3M477.5 31.5V33.7M478.5 31.9V33.3M479.5 31.4V33.8M506.5 31.6V33.6M507.5 31.8V33.4M508.5 31.6V33.6M509.5 31.7V33.5M510.5 31.9V33.3M511.5 31.6V33.6M512.5 31.7V33.5M513.5 31.6V33.6M514.5 31.3V33.9M515.5 31.5V33.7M516.5 31.7V33.5M517.5 31.3V33.9M518.5 31.2V34.0M531.5 31.6V33.6M532.5 31.2V34.0M533.5 31.9V33.3M534.5 31.8V33.4M535.5 31.8V33.4M536.5 31.2V34.0M537.5 31.4V33.8M538.5 31.4V33.8M539.5 31.7V33.5M540.5 31.6V33.6M541.5 31.2V34.0M542.5 31.9V33.3M591.5 31.9V33.3M610.5 31.6V33.6M611.5 31.7V33.5M612.5 31.7V33.5M613.5 31.9V33.3M614.5 31.4V33.8M615.5 31.8V33.4M616.5 31.9V33.3M617.5 31.8V33.4M633.5 31.9V33.3M650.5 31.2V34.0M651.5 31.7V33.5M652.5 31.6V33.6M653.5 31.9V33.3M654.5 31.2V34.0M655.5 31.3V33.9M656.5 31.6V33.6M657.5 31.9V33.3M658.5 31.6V33.6M659.5 31.7V33.5M660.5 31.3V33.9M661.5 31.2V34.0M662.5 31.4V33.8M663.5 31.7V33.5M673.5 31.8V33.4M674.5 31.8V33.4M690.5 31.9V33.3M691.5 31.6V33.6M692.5 31.6V33.6M693.5 31.3V33.9M694.5 32.0V33.2M695.5 31.9V33.3M696.5 31.4V33.8M697.5 31.6V33.6M698.5 31.6V33.6M699.5 31.4V33.8M700.5 31.5V33.7M701.5 31.5V33.7M729.5 32.0V33.2M745.5 31.2V34.0M746.5 30.9V34.3M747.5 30.7V34.5M748.5 30.9V34.3M749.5 31.2V34.0M750.5 30.6V34.6M751.5 30.6V34.6M752.5 30.5V34.7M753.5 30.5V34.7M754.5 31.6V33.6M755.5 30.8V34.4M756.5 31.2V34.0M757.5 31.1V34.1M758.5 31.0V34.2M759.5 31.4V33.8M760.5 31.3V33.9M761.5 30.4V34.8M762.5 31.2V34.0M763.5 30.5V34.7M764.5 30.8V34.4M765.5 31.2V34.0M766.5 31.2V34.0M770.5 31.8V33.4M771.5 31.7V33.5M772.5 32.0V33.2M777.5 31.2V34.0M778.5 30.2V35.0M779.5 30.4V34.8M780.5 31.3V33.9M781.5 30.3V34.9M782.5 30.6V34.6M783.5 31.0V34.2M784.5 30.2V35.0M785.5 31.3V33.9M786.5 31.3V33.9M787.5 31.0V34.2M788.5 30.4V34.8M789.5 30.7V34.5M790.5 30.8V34.4M791.5 30.2V35.0M792.5 30.9V34.3M796.5 31.6V33.6M798.5 31.6V33.6M799.5 32.0V33.2M800.5 31.7V33.5M804.5 31.7V33.5M805.5 31.8V33.4M806.5 31.9V33.3M811.5 32.0V33.2M812.5 31.9V33.3M813.5 32.0V33.2M819.5 32.0V33.2M826.5 31.9V33.3M828.5 31.9V33.3M868.5 31.7V33.5M869.5 31.7V33.5M870.5 32.0V33.2M890.5 31.9V33.3M891.5 31.8V33.4M914.5 31.8V33.4M915.5 31.9V33.3M916.5 32.0V33.2M934.5 32.0V33.2M935.5 31.9V33.3M936.5 31.5V33.7M960.5 31.9V33.3M961.5 32.0V33.2M985.5 31.9V33.3M1036.5 31.7V33.5M1037.5 31.6V33.6M1038.5 31.7V33.5M1039.5 31.8V33.4M1040.5 31.6V33.6M1041.5 32.0V33.2M1049.5 31.9V33.3M1101.5 31.9V33.3M1127.5 31.5V33.7M1128.5 31.3V33.9M1129.5 31.4V33.8M1130.5 31.4V33.8M1131.5 31.4V33.8M1132.5 31.4V33.8M1133.5 31.3V33.9M1134.5 31.4V33.8M1141.5 31.9V33.3M1153.5 31.1V34.1M1154.5 31.7V33.5M1155.5 31.1V34.1M1156.5 31.9V33.3M1157.5 31.6V33.6M1158.5 31.2V34.0M1159.5 31.8V33.4M1165.5 31.9V33.3M1166.5 31.8V33.4M1188.5 31.3V33.9M1189.5 31.4V33.8M1190.5 31.8V33.4M1191.5 31.4V33.8M1192.5 31.4V33.8M1193.5 31.1V34.1M1194.5 31.5V33.7M1195.5 31.1V34.1M1196.5 31.5V33.7M1200.5 31.9V33.3M1201.5 31.8V33.4M1212.5 31.6V33.6M1213.5 31.9V33.3M1214.5 31.9V33.3M1220.5 30.8V34.4M1221.5 31.2V34.0M1222.5 31.2V34.0M1223.5 31.5V33.7M1224.5 31.5V33.7M1225.5 31.0V34.2M1226.5 31.2V34.0M1227.5 31.1V34.1M1228.5 31.0V34.2M1231.5 30.9V34.3M1232.5 31.3V33.9M1233.5 30.7V34.5M1234.5 31.2V34.0M1235.5 31.5V33.7M1236.5 30.7V34.5M1237.5 30.7V34.5M1238.5 31.5V33.7M1239.5 30.7V34.5" stroke="#93d4c6" stroke-width="1" fill="none" opacity="0.88"/><path d="M152 0.8C166 4 174 22 178.5 41" stroke="#1428c8" stroke-width="1.4" fill="none"/><path d="M179.5 41C196 30 216 22.5 250 22.2H318" stroke="#1428c8" stroke-width="1.4" fill="none"/><path d="M85 0.5H98L96 3.5H87Z" fill="#1414dc"/><path d="M278.5 22H293L291 25.2H280.5Z" fill="#1414dc"/><path d="M774 0.5H787L785 3.5H776Z" fill="#1414dc"/><path d="M1242 0.5V7L1236.5 0.5Z" fill="#1414dc"/><path d="M32 0.5h4.5l-4.5 4.5Z" fill="#1414dc"/><path d="M173.5 0.5H184.5L179 6Z" fill="#5c7890"/><path d="M313.5 0.5H324.5L319 6Z" fill="#c8643c"/><path d="M313.5 0.5H319V6Z" fill="#2838c8"/><path d="M32 41V37l4 4Z" fill="#fff"/><path d="M179 41V37l4 4Z" fill="#fff"/><path d="M320 41V36l4.5 5Z" fill="#fff" stroke="#222" stroke-width="0.6"/></svg>
<div class="abs" style="left:272.5px;top:663.5px;width:41.5px;height:11px;background:#fff;font-size:11.5px;line-height:12px;text-align:center;color:#000;letter-spacing:-0.2px;overflow:hidden;border:0.5px solid #333;box-sizing:border-box">203.8%</div>
<svg class="abs" style="left:0;top:406px;z-index:5" width="1261" height="268"><path d="M99.4 0V268" stroke="#a8c4e4" stroke-opacity="0.5" stroke-width="1" stroke-dasharray="1 3"/><path d="M167.3 0V268" stroke="#a8c4e4" stroke-opacity="0.5" stroke-width="1" stroke-dasharray="1 3"/><path d="M235.1 0V268" stroke="#a8c4e4" stroke-opacity="0.5" stroke-width="1" stroke-dasharray="1 3"/><path d="M303.0 0V268" stroke="#a8c4e4" stroke-opacity="0.5" stroke-width="1" stroke-dasharray="1 3"/><path d="M370.9 0V268" stroke="#a8c4e4" stroke-opacity="0.5" stroke-width="1" stroke-dasharray="1 3"/><path d="M438.8 0V268" stroke="#a8c4e4" stroke-opacity="0.5" stroke-width="1" stroke-dasharray="1 3"/><path d="M506.7 0V268" stroke="#a8c4e4" stroke-opacity="0.5" stroke-width="1" stroke-dasharray="1 3"/><path d="M574.5 0V268" stroke="#a8c4e4" stroke-opacity="0.5" stroke-width="1" stroke-dasharray="1 3"/><path d="M642.4 0V268" stroke="#a8c4e4" stroke-opacity="0.5" stroke-width="1" stroke-dasharray="1 3"/><path d="M710.3 0V268" stroke="#a8c4e4" stroke-opacity="0.5" stroke-width="1" stroke-dasharray="1 3"/><path d="M778.2 0V268" stroke="#a8c4e4" stroke-opacity="0.5" stroke-width="1" stroke-dasharray="1 3"/><path d="M846.1 0V268" stroke="#a8c4e4" stroke-opacity="0.5" stroke-width="1" stroke-dasharray="1 3"/><path d="M913.9 0V268" stroke="#a8c4e4" stroke-opacity="0.5" stroke-width="1" stroke-dasharray="1 3"/><path d="M981.8 0V268" stroke="#a8c4e4" stroke-opacity="0.5" stroke-width="1" stroke-dasharray="1 3"/><path d="M1049.7 0V268" stroke="#a8c4e4" stroke-opacity="0.5" stroke-width="1" stroke-dasharray="1 3"/><path d="M1117.6 0V268" stroke="#a8c4e4" stroke-opacity="0.5" stroke-width="1" stroke-dasharray="1 3"/><path d="M1185.5 0V268" stroke="#a8c4e4" stroke-opacity="0.5" stroke-width="1" stroke-dasharray="1 3"/></svg>
<div class="abs" style="left:30.4px;top:389px;width:1.6px;height:285px;background:#18186e;z-index:7"></div>
<div class="abs" style="left:1250px;top:405px;width:1.6px;height:269px;background:#000;z-index:7"></div>
<svg class="abs" style="left:1252px;top:406px" width="3" height="268"><path d="M1.5 2V268" stroke="#d8d8d8" stroke-width="1.2" stroke-dasharray="1 3"/></svg>
<svg class="abs" style="left:1243px;top:389px;z-index:7" width="16" height="18"><path d="M1.7 1.8H13.3V11.5L7.5 16.8L1.7 11.5Z" fill="#fff" stroke="#333" stroke-width="0.5"/><rect x="4.3" y="5" width="1.5" height="3.7" fill="#000"/><rect x="9.3" y="5" width="1.5" height="3.7" fill="#000"/></svg>
</body></html>
